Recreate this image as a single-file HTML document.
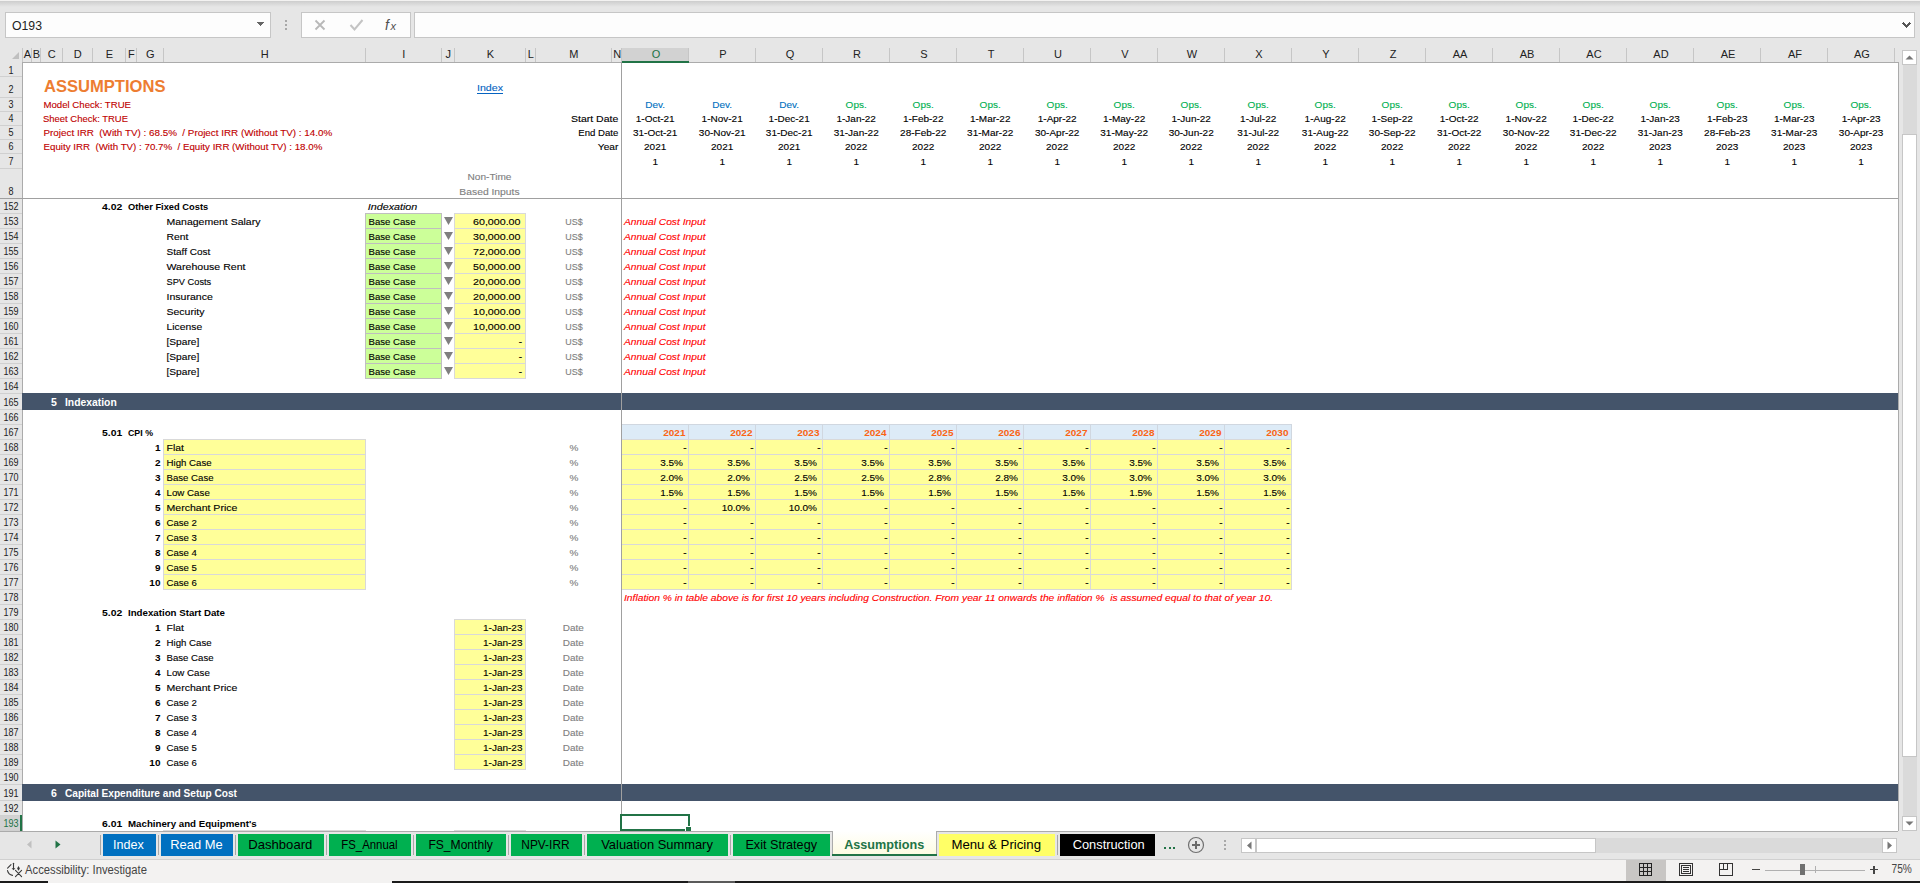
<!DOCTYPE html>
<html><head><meta charset="utf-8"><style>html,body{margin:0;padding:0;background:#fff;overflow:hidden}svg{display:block}text{font-family:"Liberation Sans",sans-serif;white-space:pre}</style></head>
<body><svg width="1920" height="883" viewBox="0 0 1920 883" shape-rendering="crispEdges">
<rect x="0" y="0" width="1920" height="883" fill="#e6e6e6" />
<rect x="0" y="0" width="1920" height="1" fill="#f3f2f1" />
<defs><linearGradient id="tg" x1="0" y1="0" x2="0" y2="1"><stop offset="0" stop-color="#cdcdcd"/><stop offset="1" stop-color="#e6e6e6"/></linearGradient></defs>
<rect x="0" y="1" width="1920" height="6" fill="url(#tg)" />
<rect x="5.5" y="12.5" width="265" height="25" fill="#fdfdfd" stroke="#c6c6c6" stroke-width="1"/>
<text x="12" y="30" font-size="13.0" fill="#222" textLength="30" lengthAdjust="spacingAndGlyphs" >O193</text>
<path d="M257 22 L264 22 L260.5 26 Z" fill="#666"/>
<rect x="285" y="20" width="2" height="2" fill="#a8a8a8" />
<rect x="285" y="24" width="2" height="2" fill="#a8a8a8" />
<rect x="285" y="28" width="2" height="2" fill="#a8a8a8" />
<rect x="301.5" y="12.5" width="109" height="25" fill="#fdfdfd" stroke="#c6c6c6" stroke-width="1"/>
<path d="M315.5 20.5 L324.5 29.5 M324.5 20.5 L315.5 29.5" stroke="#b8b8b8" stroke-width="1.8" fill="none" shape-rendering="auto"/>
<path d="M350.5 25 L354.5 29.5 L362.5 20" stroke="#c4c4c4" stroke-width="2" fill="none" shape-rendering="auto"/>
<text x="385" y="29.5" font-size="14.0" fill="#505050" font-style="italic" font-family="Liberation Serif" >f</text>
<text x="390.5" y="29.5" font-size="11.0" fill="#505050" font-style="italic" font-family="Liberation Serif" >x</text>
<rect x="414.5" y="12.5" width="1500" height="25" fill="#fdfdfd" stroke="#c6c6c6" stroke-width="1"/>
<path d="M1903 23 L1906.5 26.5 L1910 23" stroke="#555" stroke-width="1.5" fill="none"/>
<rect x="22" y="62" width="1876" height="769" fill="#ffffff" />
<rect x="22" y="47" width="1876" height="15" fill="#e6e6e6" />
<rect x="622" y="48" width="67" height="14" fill="#d2d2d2" />
<line x1="0" y1="62.5" x2="22" y2="62.5" stroke="#c4c4c4" stroke-width="1"/>
<line x1="22" y1="62.5" x2="1898" y2="62.5" stroke="#ababab" stroke-width="1"/>
<line x1="22.5" y1="48" x2="22.5" y2="62" stroke="#c6c6c6" stroke-width="1"/>
<text x="27.3" y="57.5" font-size="11.0" fill="#222" text-anchor="middle" >A</text>
<line x1="31.5" y1="48" x2="31.5" y2="62" stroke="#c6c6c6" stroke-width="1"/>
<text x="36.3" y="57.5" font-size="11.0" fill="#222" text-anchor="middle" >B</text>
<line x1="40.5" y1="48" x2="40.5" y2="62" stroke="#c6c6c6" stroke-width="1"/>
<text x="51.8" y="57.5" font-size="11.0" fill="#222" text-anchor="middle" >C</text>
<line x1="62.5" y1="48" x2="62.5" y2="62" stroke="#c6c6c6" stroke-width="1"/>
<text x="77.8" y="57.5" font-size="11.0" fill="#222" text-anchor="middle" >D</text>
<line x1="92.5" y1="48" x2="92.5" y2="62" stroke="#c6c6c6" stroke-width="1"/>
<text x="109.3" y="57.5" font-size="11.0" fill="#222" text-anchor="middle" >E</text>
<line x1="125.5" y1="48" x2="125.5" y2="62" stroke="#c6c6c6" stroke-width="1"/>
<text x="131.3" y="57.5" font-size="11.0" fill="#222" text-anchor="middle" >F</text>
<line x1="136.5" y1="48" x2="136.5" y2="62" stroke="#c6c6c6" stroke-width="1"/>
<text x="150.3" y="57.5" font-size="11.0" fill="#222" text-anchor="middle" >G</text>
<line x1="163.5" y1="48" x2="163.5" y2="62" stroke="#c6c6c6" stroke-width="1"/>
<text x="264.8" y="57.5" font-size="11.0" fill="#222" text-anchor="middle" >H</text>
<line x1="365.5" y1="48" x2="365.5" y2="62" stroke="#c6c6c6" stroke-width="1"/>
<text x="403.8" y="57.5" font-size="11.0" fill="#222" text-anchor="middle" >I</text>
<line x1="441.5" y1="48" x2="441.5" y2="62" stroke="#c6c6c6" stroke-width="1"/>
<text x="448.3" y="57.5" font-size="11.0" fill="#222" text-anchor="middle" >J</text>
<line x1="454.5" y1="48" x2="454.5" y2="62" stroke="#c6c6c6" stroke-width="1"/>
<text x="490.3" y="57.5" font-size="11.0" fill="#222" text-anchor="middle" >K</text>
<line x1="525.5" y1="48" x2="525.5" y2="62" stroke="#c6c6c6" stroke-width="1"/>
<text x="530.8" y="57.5" font-size="11.0" fill="#222" text-anchor="middle" >L</text>
<line x1="535.5" y1="48" x2="535.5" y2="62" stroke="#c6c6c6" stroke-width="1"/>
<text x="573.8" y="57.5" font-size="11.0" fill="#222" text-anchor="middle" >M</text>
<line x1="611.5" y1="48" x2="611.5" y2="62" stroke="#c6c6c6" stroke-width="1"/>
<text x="617.15" y="57.5" font-size="11.0" fill="#222" text-anchor="middle" >N</text>
<line x1="621.5" y1="48" x2="621.5" y2="62" stroke="#c6c6c6" stroke-width="1"/>
<text x="656.0" y="57.5" font-size="11.0" fill="#217346" text-anchor="middle" >O</text>
<line x1="688.5" y1="48" x2="688.5" y2="62" stroke="#c6c6c6" stroke-width="1"/>
<text x="723.0" y="57.5" font-size="11.0" fill="#222" text-anchor="middle" >P</text>
<line x1="755.5" y1="48" x2="755.5" y2="62" stroke="#c6c6c6" stroke-width="1"/>
<text x="790.0" y="57.5" font-size="11.0" fill="#222" text-anchor="middle" >Q</text>
<line x1="822.5" y1="48" x2="822.5" y2="62" stroke="#c6c6c6" stroke-width="1"/>
<text x="857.0" y="57.5" font-size="11.0" fill="#222" text-anchor="middle" >R</text>
<line x1="889.5" y1="48" x2="889.5" y2="62" stroke="#c6c6c6" stroke-width="1"/>
<text x="924.0" y="57.5" font-size="11.0" fill="#222" text-anchor="middle" >S</text>
<line x1="956.5" y1="48" x2="956.5" y2="62" stroke="#c6c6c6" stroke-width="1"/>
<text x="991.0" y="57.5" font-size="11.0" fill="#222" text-anchor="middle" >T</text>
<line x1="1023.5" y1="48" x2="1023.5" y2="62" stroke="#c6c6c6" stroke-width="1"/>
<text x="1058.0" y="57.5" font-size="11.0" fill="#222" text-anchor="middle" >U</text>
<line x1="1090.5" y1="48" x2="1090.5" y2="62" stroke="#c6c6c6" stroke-width="1"/>
<text x="1125.0" y="57.5" font-size="11.0" fill="#222" text-anchor="middle" >V</text>
<line x1="1157.5" y1="48" x2="1157.5" y2="62" stroke="#c6c6c6" stroke-width="1"/>
<text x="1192.0" y="57.5" font-size="11.0" fill="#222" text-anchor="middle" >W</text>
<line x1="1224.5" y1="48" x2="1224.5" y2="62" stroke="#c6c6c6" stroke-width="1"/>
<text x="1259.0" y="57.5" font-size="11.0" fill="#222" text-anchor="middle" >X</text>
<line x1="1291.5" y1="48" x2="1291.5" y2="62" stroke="#c6c6c6" stroke-width="1"/>
<text x="1326.0" y="57.5" font-size="11.0" fill="#222" text-anchor="middle" >Y</text>
<line x1="1358.5" y1="48" x2="1358.5" y2="62" stroke="#c6c6c6" stroke-width="1"/>
<text x="1393.0" y="57.5" font-size="11.0" fill="#222" text-anchor="middle" >Z</text>
<line x1="1425.5" y1="48" x2="1425.5" y2="62" stroke="#c6c6c6" stroke-width="1"/>
<text x="1460.0" y="57.5" font-size="11.0" fill="#222" text-anchor="middle" >AA</text>
<line x1="1492.5" y1="48" x2="1492.5" y2="62" stroke="#c6c6c6" stroke-width="1"/>
<text x="1527.0" y="57.5" font-size="11.0" fill="#222" text-anchor="middle" >AB</text>
<line x1="1559.5" y1="48" x2="1559.5" y2="62" stroke="#c6c6c6" stroke-width="1"/>
<text x="1594.0" y="57.5" font-size="11.0" fill="#222" text-anchor="middle" >AC</text>
<line x1="1626.5" y1="48" x2="1626.5" y2="62" stroke="#c6c6c6" stroke-width="1"/>
<text x="1661.0" y="57.5" font-size="11.0" fill="#222" text-anchor="middle" >AD</text>
<line x1="1693.5" y1="48" x2="1693.5" y2="62" stroke="#c6c6c6" stroke-width="1"/>
<text x="1728.0" y="57.5" font-size="11.0" fill="#222" text-anchor="middle" >AE</text>
<line x1="1760.5" y1="48" x2="1760.5" y2="62" stroke="#c6c6c6" stroke-width="1"/>
<text x="1795.0" y="57.5" font-size="11.0" fill="#222" text-anchor="middle" >AF</text>
<line x1="1827.5" y1="48" x2="1827.5" y2="62" stroke="#c6c6c6" stroke-width="1"/>
<text x="1861.8999999999999" y="57.5" font-size="11.0" fill="#222" text-anchor="middle" >AG</text>
<line x1="1894.5" y1="48" x2="1894.5" y2="62" stroke="#c6c6c6" stroke-width="1"/>
<rect x="622" y="61" width="67" height="2" fill="#217346" />
<path d="M19 52 L19 59 L12 59 Z" fill="#bfbfbf" shape-rendering="auto"/>
<rect x="0" y="62" width="22" height="769" fill="#e6e6e6" />
<line x1="0" y1="76.5" x2="22" y2="76.5" stroke="#d0d0d0" stroke-width="1"/>
<text x="11" y="74" font-size="10.5" fill="#222" text-anchor="middle" textLength="5" lengthAdjust="spacingAndGlyphs" >1</text>
<line x1="0" y1="97.5" x2="22" y2="97.5" stroke="#d0d0d0" stroke-width="1"/>
<text x="11" y="92.5" font-size="10.5" fill="#222" text-anchor="middle" textLength="5" lengthAdjust="spacingAndGlyphs" >2</text>
<line x1="0" y1="111.5" x2="22" y2="111.5" stroke="#d0d0d0" stroke-width="1"/>
<text x="11" y="107.5" font-size="10.5" fill="#222" text-anchor="middle" textLength="5" lengthAdjust="spacingAndGlyphs" >3</text>
<line x1="0" y1="125.5" x2="22" y2="125.5" stroke="#d0d0d0" stroke-width="1"/>
<text x="11" y="121.5" font-size="10.5" fill="#222" text-anchor="middle" textLength="5" lengthAdjust="spacingAndGlyphs" >4</text>
<line x1="0" y1="139.5" x2="22" y2="139.5" stroke="#d0d0d0" stroke-width="1"/>
<text x="11" y="135.5" font-size="10.5" fill="#222" text-anchor="middle" textLength="5" lengthAdjust="spacingAndGlyphs" >5</text>
<line x1="0" y1="153.5" x2="22" y2="153.5" stroke="#d0d0d0" stroke-width="1"/>
<text x="11" y="149.5" font-size="10.5" fill="#222" text-anchor="middle" textLength="5" lengthAdjust="spacingAndGlyphs" >6</text>
<line x1="0" y1="168.5" x2="22" y2="168.5" stroke="#d0d0d0" stroke-width="1"/>
<text x="11" y="164.5" font-size="10.5" fill="#222" text-anchor="middle" textLength="5" lengthAdjust="spacingAndGlyphs" >7</text>
<line x1="0" y1="198.5" x2="22" y2="198.5" stroke="#d0d0d0" stroke-width="1"/>
<text x="11" y="195" font-size="10.5" fill="#222" text-anchor="middle" textLength="5" lengthAdjust="spacingAndGlyphs" >8</text>
<line x1="0" y1="213.5" x2="22" y2="213.5" stroke="#d0d0d0" stroke-width="1"/>
<text x="11" y="209.5" font-size="10.5" fill="#222" text-anchor="middle" textLength="15" lengthAdjust="spacingAndGlyphs" >152</text>
<line x1="0" y1="228.5" x2="22" y2="228.5" stroke="#d0d0d0" stroke-width="1"/>
<text x="11" y="224.5" font-size="10.5" fill="#222" text-anchor="middle" textLength="15" lengthAdjust="spacingAndGlyphs" >153</text>
<line x1="0" y1="243.5" x2="22" y2="243.5" stroke="#d0d0d0" stroke-width="1"/>
<text x="11" y="239.5" font-size="10.5" fill="#222" text-anchor="middle" textLength="15" lengthAdjust="spacingAndGlyphs" >154</text>
<line x1="0" y1="258.5" x2="22" y2="258.5" stroke="#d0d0d0" stroke-width="1"/>
<text x="11" y="254.5" font-size="10.5" fill="#222" text-anchor="middle" textLength="15" lengthAdjust="spacingAndGlyphs" >155</text>
<line x1="0" y1="273.5" x2="22" y2="273.5" stroke="#d0d0d0" stroke-width="1"/>
<text x="11" y="269.5" font-size="10.5" fill="#222" text-anchor="middle" textLength="15" lengthAdjust="spacingAndGlyphs" >156</text>
<line x1="0" y1="288.5" x2="22" y2="288.5" stroke="#d0d0d0" stroke-width="1"/>
<text x="11" y="284.5" font-size="10.5" fill="#222" text-anchor="middle" textLength="15" lengthAdjust="spacingAndGlyphs" >157</text>
<line x1="0" y1="303.5" x2="22" y2="303.5" stroke="#d0d0d0" stroke-width="1"/>
<text x="11" y="299.5" font-size="10.5" fill="#222" text-anchor="middle" textLength="15" lengthAdjust="spacingAndGlyphs" >158</text>
<line x1="0" y1="318.5" x2="22" y2="318.5" stroke="#d0d0d0" stroke-width="1"/>
<text x="11" y="314.5" font-size="10.5" fill="#222" text-anchor="middle" textLength="15" lengthAdjust="spacingAndGlyphs" >159</text>
<line x1="0" y1="333.5" x2="22" y2="333.5" stroke="#d0d0d0" stroke-width="1"/>
<text x="11" y="329.5" font-size="10.5" fill="#222" text-anchor="middle" textLength="15" lengthAdjust="spacingAndGlyphs" >160</text>
<line x1="0" y1="348.5" x2="22" y2="348.5" stroke="#d0d0d0" stroke-width="1"/>
<text x="11" y="344.5" font-size="10.5" fill="#222" text-anchor="middle" textLength="15" lengthAdjust="spacingAndGlyphs" >161</text>
<line x1="0" y1="363.5" x2="22" y2="363.5" stroke="#d0d0d0" stroke-width="1"/>
<text x="11" y="359.5" font-size="10.5" fill="#222" text-anchor="middle" textLength="15" lengthAdjust="spacingAndGlyphs" >162</text>
<line x1="0" y1="378.5" x2="22" y2="378.5" stroke="#d0d0d0" stroke-width="1"/>
<text x="11" y="374.5" font-size="10.5" fill="#222" text-anchor="middle" textLength="15" lengthAdjust="spacingAndGlyphs" >163</text>
<line x1="0" y1="393.5" x2="22" y2="393.5" stroke="#d0d0d0" stroke-width="1"/>
<text x="11" y="389.5" font-size="10.5" fill="#222" text-anchor="middle" textLength="15" lengthAdjust="spacingAndGlyphs" >164</text>
<line x1="0" y1="409.5" x2="22" y2="409.5" stroke="#d0d0d0" stroke-width="1"/>
<text x="11" y="405.5" font-size="10.5" fill="#222" text-anchor="middle" textLength="15" lengthAdjust="spacingAndGlyphs" >165</text>
<line x1="0" y1="424.5" x2="22" y2="424.5" stroke="#d0d0d0" stroke-width="1"/>
<text x="11" y="420.5" font-size="10.5" fill="#222" text-anchor="middle" textLength="15" lengthAdjust="spacingAndGlyphs" >166</text>
<line x1="0" y1="439.5" x2="22" y2="439.5" stroke="#d0d0d0" stroke-width="1"/>
<text x="11" y="435.5" font-size="10.5" fill="#222" text-anchor="middle" textLength="15" lengthAdjust="spacingAndGlyphs" >167</text>
<line x1="0" y1="454.5" x2="22" y2="454.5" stroke="#d0d0d0" stroke-width="1"/>
<text x="11" y="450.5" font-size="10.5" fill="#222" text-anchor="middle" textLength="15" lengthAdjust="spacingAndGlyphs" >168</text>
<line x1="0" y1="469.5" x2="22" y2="469.5" stroke="#d0d0d0" stroke-width="1"/>
<text x="11" y="465.5" font-size="10.5" fill="#222" text-anchor="middle" textLength="15" lengthAdjust="spacingAndGlyphs" >169</text>
<line x1="0" y1="484.5" x2="22" y2="484.5" stroke="#d0d0d0" stroke-width="1"/>
<text x="11" y="480.5" font-size="10.5" fill="#222" text-anchor="middle" textLength="15" lengthAdjust="spacingAndGlyphs" >170</text>
<line x1="0" y1="499.5" x2="22" y2="499.5" stroke="#d0d0d0" stroke-width="1"/>
<text x="11" y="495.5" font-size="10.5" fill="#222" text-anchor="middle" textLength="15" lengthAdjust="spacingAndGlyphs" >171</text>
<line x1="0" y1="514.5" x2="22" y2="514.5" stroke="#d0d0d0" stroke-width="1"/>
<text x="11" y="510.5" font-size="10.5" fill="#222" text-anchor="middle" textLength="15" lengthAdjust="spacingAndGlyphs" >172</text>
<line x1="0" y1="529.5" x2="22" y2="529.5" stroke="#d0d0d0" stroke-width="1"/>
<text x="11" y="525.5" font-size="10.5" fill="#222" text-anchor="middle" textLength="15" lengthAdjust="spacingAndGlyphs" >173</text>
<line x1="0" y1="544.5" x2="22" y2="544.5" stroke="#d0d0d0" stroke-width="1"/>
<text x="11" y="540.5" font-size="10.5" fill="#222" text-anchor="middle" textLength="15" lengthAdjust="spacingAndGlyphs" >174</text>
<line x1="0" y1="559.5" x2="22" y2="559.5" stroke="#d0d0d0" stroke-width="1"/>
<text x="11" y="555.5" font-size="10.5" fill="#222" text-anchor="middle" textLength="15" lengthAdjust="spacingAndGlyphs" >175</text>
<line x1="0" y1="574.5" x2="22" y2="574.5" stroke="#d0d0d0" stroke-width="1"/>
<text x="11" y="570.5" font-size="10.5" fill="#222" text-anchor="middle" textLength="15" lengthAdjust="spacingAndGlyphs" >176</text>
<line x1="0" y1="589.5" x2="22" y2="589.5" stroke="#d0d0d0" stroke-width="1"/>
<text x="11" y="585.5" font-size="10.5" fill="#222" text-anchor="middle" textLength="15" lengthAdjust="spacingAndGlyphs" >177</text>
<line x1="0" y1="604.5" x2="22" y2="604.5" stroke="#d0d0d0" stroke-width="1"/>
<text x="11" y="600.5" font-size="10.5" fill="#222" text-anchor="middle" textLength="15" lengthAdjust="spacingAndGlyphs" >178</text>
<line x1="0" y1="619.5" x2="22" y2="619.5" stroke="#d0d0d0" stroke-width="1"/>
<text x="11" y="615.5" font-size="10.5" fill="#222" text-anchor="middle" textLength="15" lengthAdjust="spacingAndGlyphs" >179</text>
<line x1="0" y1="634.5" x2="22" y2="634.5" stroke="#d0d0d0" stroke-width="1"/>
<text x="11" y="630.5" font-size="10.5" fill="#222" text-anchor="middle" textLength="15" lengthAdjust="spacingAndGlyphs" >180</text>
<line x1="0" y1="649.5" x2="22" y2="649.5" stroke="#d0d0d0" stroke-width="1"/>
<text x="11" y="645.5" font-size="10.5" fill="#222" text-anchor="middle" textLength="15" lengthAdjust="spacingAndGlyphs" >181</text>
<line x1="0" y1="664.5" x2="22" y2="664.5" stroke="#d0d0d0" stroke-width="1"/>
<text x="11" y="660.5" font-size="10.5" fill="#222" text-anchor="middle" textLength="15" lengthAdjust="spacingAndGlyphs" >182</text>
<line x1="0" y1="679.5" x2="22" y2="679.5" stroke="#d0d0d0" stroke-width="1"/>
<text x="11" y="675.5" font-size="10.5" fill="#222" text-anchor="middle" textLength="15" lengthAdjust="spacingAndGlyphs" >183</text>
<line x1="0" y1="694.5" x2="22" y2="694.5" stroke="#d0d0d0" stroke-width="1"/>
<text x="11" y="690.5" font-size="10.5" fill="#222" text-anchor="middle" textLength="15" lengthAdjust="spacingAndGlyphs" >184</text>
<line x1="0" y1="709.5" x2="22" y2="709.5" stroke="#d0d0d0" stroke-width="1"/>
<text x="11" y="705.5" font-size="10.5" fill="#222" text-anchor="middle" textLength="15" lengthAdjust="spacingAndGlyphs" >185</text>
<line x1="0" y1="724.5" x2="22" y2="724.5" stroke="#d0d0d0" stroke-width="1"/>
<text x="11" y="720.5" font-size="10.5" fill="#222" text-anchor="middle" textLength="15" lengthAdjust="spacingAndGlyphs" >186</text>
<line x1="0" y1="739.5" x2="22" y2="739.5" stroke="#d0d0d0" stroke-width="1"/>
<text x="11" y="735.5" font-size="10.5" fill="#222" text-anchor="middle" textLength="15" lengthAdjust="spacingAndGlyphs" >187</text>
<line x1="0" y1="754.5" x2="22" y2="754.5" stroke="#d0d0d0" stroke-width="1"/>
<text x="11" y="750.5" font-size="10.5" fill="#222" text-anchor="middle" textLength="15" lengthAdjust="spacingAndGlyphs" >188</text>
<line x1="0" y1="769.5" x2="22" y2="769.5" stroke="#d0d0d0" stroke-width="1"/>
<text x="11" y="765.5" font-size="10.5" fill="#222" text-anchor="middle" textLength="15" lengthAdjust="spacingAndGlyphs" >189</text>
<line x1="0" y1="784.5" x2="22" y2="784.5" stroke="#d0d0d0" stroke-width="1"/>
<text x="11" y="780.5" font-size="10.5" fill="#222" text-anchor="middle" textLength="15" lengthAdjust="spacingAndGlyphs" >190</text>
<line x1="0" y1="800.5" x2="22" y2="800.5" stroke="#d0d0d0" stroke-width="1"/>
<text x="11" y="796.5" font-size="10.5" fill="#222" text-anchor="middle" textLength="15" lengthAdjust="spacingAndGlyphs" >191</text>
<line x1="0" y1="815.5" x2="22" y2="815.5" stroke="#d0d0d0" stroke-width="1"/>
<text x="11" y="811.5" font-size="10.5" fill="#222" text-anchor="middle" textLength="15" lengthAdjust="spacingAndGlyphs" >192</text>
<line x1="0" y1="830.5" x2="22" y2="830.5" stroke="#d0d0d0" stroke-width="1"/>
<rect x="0" y="816" width="22" height="14" fill="#d2d2d2" />
<text x="11" y="826.5" font-size="10.5" fill="#217346" text-anchor="middle" textLength="15" lengthAdjust="spacingAndGlyphs" >193</text>
<line x1="22.5" y1="62" x2="22.5" y2="831" stroke="#ababab" stroke-width="1"/>
<rect x="20" y="815" width="2" height="16" fill="#217346" />
<rect x="1898" y="47" width="22" height="784" fill="#e6e6e6" />
<line x1="1898.5" y1="62" x2="1898.5" y2="831" stroke="#ababab" stroke-width="1"/>
<text x="44" y="92" font-size="17.0" fill="#ed7d31" font-weight="bold" textLength="121.5" lengthAdjust="spacingAndGlyphs" >ASSUMPTIONS</text>
<text x="43.5" y="107.6" font-size="9.3" fill="#c00000" textLength="87.5" lengthAdjust="spacingAndGlyphs"  stroke="#c00000" stroke-width="0.12">Model Check: TRUE</text>
<text x="43" y="121.6" font-size="9.3" fill="#c00000" textLength="85" lengthAdjust="spacingAndGlyphs"  stroke="#c00000" stroke-width="0.12">Sheet Check: TRUE</text>
<text x="43.5" y="135.6" font-size="9.3" fill="#c00000" textLength="288.7" lengthAdjust="spacingAndGlyphs"  stroke="#c00000" stroke-width="0.12">Project IRR  (With TV) : 68.5%  / Project IRR (Without TV) : 14.0%</text>
<text x="43.5" y="149.6" font-size="9.3" fill="#c00000" textLength="278.8" lengthAdjust="spacingAndGlyphs"  stroke="#c00000" stroke-width="0.12">Equity IRR  (With TV) : 70.7%  / Equity IRR (Without TV) : 18.0%</text>
<text x="477" y="91.4" font-size="9.3" fill="#0563c1" textLength="26" lengthAdjust="spacingAndGlyphs"  stroke="#0563c1" stroke-width="0.12">Index</text>
<rect x="477" y="93" width="26" height="1" fill="#0563c1" />
<text x="618.3" y="121.6" font-size="9.3" fill="#000" text-anchor="end" textLength="47.3" lengthAdjust="spacingAndGlyphs"  stroke="#000" stroke-width="0.12">Start Date</text>
<text x="618.3" y="135.6" font-size="9.3" fill="#000" text-anchor="end" textLength="40" lengthAdjust="spacingAndGlyphs"  stroke="#000" stroke-width="0.12">End Date</text>
<text x="618.3" y="149.6" font-size="9.3" fill="#000" text-anchor="end" textLength="20.5" lengthAdjust="spacingAndGlyphs"  stroke="#000" stroke-width="0.12">Year</text>
<text x="489.5" y="179.6" font-size="9.3" fill="#808080" text-anchor="middle" textLength="44" lengthAdjust="spacingAndGlyphs"  stroke="#808080" stroke-width="0.12">Non-Time</text>
<text x="489.5" y="194.6" font-size="9.3" fill="#808080" text-anchor="middle" textLength="60.3" lengthAdjust="spacingAndGlyphs"  stroke="#808080" stroke-width="0.12">Based Inputs</text>
<text x="655.2" y="107.6" font-size="9.3" fill="#0070c0" text-anchor="middle" textLength="19.82" lengthAdjust="spacingAndGlyphs"  stroke="#0070c0" stroke-width="0.12">Dev.</text>
<text x="655.2" y="121.6" font-size="9.3" fill="#000" text-anchor="middle" textLength="38.9" lengthAdjust="spacingAndGlyphs"  stroke="#000" stroke-width="0.12">1-Oct-21</text>
<text x="655.2" y="135.6" font-size="9.3" fill="#000" text-anchor="middle" textLength="44.46" lengthAdjust="spacingAndGlyphs"  stroke="#000" stroke-width="0.12">31-Oct-21</text>
<text x="655.2" y="149.6" font-size="9.3" fill="#000" text-anchor="middle" textLength="22.25" lengthAdjust="spacingAndGlyphs"  stroke="#000" stroke-width="0.12">2021</text>
<text x="655.2" y="164.6" font-size="9.3" fill="#000" text-anchor="middle" textLength="5.56" lengthAdjust="spacingAndGlyphs"  stroke="#000" stroke-width="0.12">1</text>
<text x="722.2" y="107.6" font-size="9.3" fill="#0070c0" text-anchor="middle" textLength="19.82" lengthAdjust="spacingAndGlyphs"  stroke="#0070c0" stroke-width="0.12">Dev.</text>
<text x="722.2" y="121.6" font-size="9.3" fill="#000" text-anchor="middle" textLength="41.13" lengthAdjust="spacingAndGlyphs"  stroke="#000" stroke-width="0.12">1-Nov-21</text>
<text x="722.2" y="135.6" font-size="9.3" fill="#000" text-anchor="middle" textLength="46.69" lengthAdjust="spacingAndGlyphs"  stroke="#000" stroke-width="0.12">30-Nov-21</text>
<text x="722.2" y="149.6" font-size="9.3" fill="#000" text-anchor="middle" textLength="22.25" lengthAdjust="spacingAndGlyphs"  stroke="#000" stroke-width="0.12">2021</text>
<text x="722.2" y="164.6" font-size="9.3" fill="#000" text-anchor="middle" textLength="5.56" lengthAdjust="spacingAndGlyphs"  stroke="#000" stroke-width="0.12">1</text>
<text x="789.2" y="107.6" font-size="9.3" fill="#0070c0" text-anchor="middle" textLength="19.82" lengthAdjust="spacingAndGlyphs"  stroke="#0070c0" stroke-width="0.12">Dev.</text>
<text x="789.2" y="121.6" font-size="9.3" fill="#000" text-anchor="middle" textLength="41.13" lengthAdjust="spacingAndGlyphs"  stroke="#000" stroke-width="0.12">1-Dec-21</text>
<text x="789.2" y="135.6" font-size="9.3" fill="#000" text-anchor="middle" textLength="46.69" lengthAdjust="spacingAndGlyphs"  stroke="#000" stroke-width="0.12">31-Dec-21</text>
<text x="789.2" y="149.6" font-size="9.3" fill="#000" text-anchor="middle" textLength="22.25" lengthAdjust="spacingAndGlyphs"  stroke="#000" stroke-width="0.12">2021</text>
<text x="789.2" y="164.6" font-size="9.3" fill="#000" text-anchor="middle" textLength="5.56" lengthAdjust="spacingAndGlyphs"  stroke="#000" stroke-width="0.12">1</text>
<text x="856.2" y="107.6" font-size="9.3" fill="#00b050" text-anchor="middle" textLength="21.12" lengthAdjust="spacingAndGlyphs"  stroke="#00b050" stroke-width="0.12">Ops.</text>
<text x="856.2" y="121.6" font-size="9.3" fill="#000" text-anchor="middle" textLength="39.47" lengthAdjust="spacingAndGlyphs"  stroke="#000" stroke-width="0.12">1-Jan-22</text>
<text x="856.2" y="135.6" font-size="9.3" fill="#000" text-anchor="middle" textLength="45.03" lengthAdjust="spacingAndGlyphs"  stroke="#000" stroke-width="0.12">31-Jan-22</text>
<text x="856.2" y="149.6" font-size="9.3" fill="#000" text-anchor="middle" textLength="22.25" lengthAdjust="spacingAndGlyphs"  stroke="#000" stroke-width="0.12">2022</text>
<text x="856.2" y="164.6" font-size="9.3" fill="#000" text-anchor="middle" textLength="5.56" lengthAdjust="spacingAndGlyphs"  stroke="#000" stroke-width="0.12">1</text>
<text x="923.2" y="107.6" font-size="9.3" fill="#00b050" text-anchor="middle" textLength="21.12" lengthAdjust="spacingAndGlyphs"  stroke="#00b050" stroke-width="0.12">Ops.</text>
<text x="923.2" y="121.6" font-size="9.3" fill="#000" text-anchor="middle" textLength="40.58" lengthAdjust="spacingAndGlyphs"  stroke="#000" stroke-width="0.12">1-Feb-22</text>
<text x="923.2" y="135.6" font-size="9.3" fill="#000" text-anchor="middle" textLength="46.14" lengthAdjust="spacingAndGlyphs"  stroke="#000" stroke-width="0.12">28-Feb-22</text>
<text x="923.2" y="149.6" font-size="9.3" fill="#000" text-anchor="middle" textLength="22.25" lengthAdjust="spacingAndGlyphs"  stroke="#000" stroke-width="0.12">2022</text>
<text x="923.2" y="164.6" font-size="9.3" fill="#000" text-anchor="middle" textLength="5.56" lengthAdjust="spacingAndGlyphs"  stroke="#000" stroke-width="0.12">1</text>
<text x="990.2" y="107.6" font-size="9.3" fill="#00b050" text-anchor="middle" textLength="21.12" lengthAdjust="spacingAndGlyphs"  stroke="#00b050" stroke-width="0.12">Ops.</text>
<text x="990.2" y="121.6" font-size="9.3" fill="#000" text-anchor="middle" textLength="40.57" lengthAdjust="spacingAndGlyphs"  stroke="#000" stroke-width="0.12">1-Mar-22</text>
<text x="990.2" y="135.6" font-size="9.3" fill="#000" text-anchor="middle" textLength="46.13" lengthAdjust="spacingAndGlyphs"  stroke="#000" stroke-width="0.12">31-Mar-22</text>
<text x="990.2" y="149.6" font-size="9.3" fill="#000" text-anchor="middle" textLength="22.25" lengthAdjust="spacingAndGlyphs"  stroke="#000" stroke-width="0.12">2022</text>
<text x="990.2" y="164.6" font-size="9.3" fill="#000" text-anchor="middle" textLength="5.56" lengthAdjust="spacingAndGlyphs"  stroke="#000" stroke-width="0.12">1</text>
<text x="1057.2" y="107.6" font-size="9.3" fill="#00b050" text-anchor="middle" textLength="21.12" lengthAdjust="spacingAndGlyphs"  stroke="#00b050" stroke-width="0.12">Ops.</text>
<text x="1057.2" y="121.6" font-size="9.3" fill="#000" text-anchor="middle" textLength="38.91" lengthAdjust="spacingAndGlyphs"  stroke="#000" stroke-width="0.12">1-Apr-22</text>
<text x="1057.2" y="135.6" font-size="9.3" fill="#000" text-anchor="middle" textLength="44.47" lengthAdjust="spacingAndGlyphs"  stroke="#000" stroke-width="0.12">30-Apr-22</text>
<text x="1057.2" y="149.6" font-size="9.3" fill="#000" text-anchor="middle" textLength="22.25" lengthAdjust="spacingAndGlyphs"  stroke="#000" stroke-width="0.12">2022</text>
<text x="1057.2" y="164.6" font-size="9.3" fill="#000" text-anchor="middle" textLength="5.56" lengthAdjust="spacingAndGlyphs"  stroke="#000" stroke-width="0.12">1</text>
<text x="1124.2" y="107.6" font-size="9.3" fill="#00b050" text-anchor="middle" textLength="21.12" lengthAdjust="spacingAndGlyphs"  stroke="#00b050" stroke-width="0.12">Ops.</text>
<text x="1124.2" y="121.6" font-size="9.3" fill="#000" text-anchor="middle" textLength="42.24" lengthAdjust="spacingAndGlyphs"  stroke="#000" stroke-width="0.12">1-May-22</text>
<text x="1124.2" y="135.6" font-size="9.3" fill="#000" text-anchor="middle" textLength="47.8" lengthAdjust="spacingAndGlyphs"  stroke="#000" stroke-width="0.12">31-May-22</text>
<text x="1124.2" y="149.6" font-size="9.3" fill="#000" text-anchor="middle" textLength="22.25" lengthAdjust="spacingAndGlyphs"  stroke="#000" stroke-width="0.12">2022</text>
<text x="1124.2" y="164.6" font-size="9.3" fill="#000" text-anchor="middle" textLength="5.56" lengthAdjust="spacingAndGlyphs"  stroke="#000" stroke-width="0.12">1</text>
<text x="1191.2" y="107.6" font-size="9.3" fill="#00b050" text-anchor="middle" textLength="21.12" lengthAdjust="spacingAndGlyphs"  stroke="#00b050" stroke-width="0.12">Ops.</text>
<text x="1191.2" y="121.6" font-size="9.3" fill="#000" text-anchor="middle" textLength="39.47" lengthAdjust="spacingAndGlyphs"  stroke="#000" stroke-width="0.12">1-Jun-22</text>
<text x="1191.2" y="135.6" font-size="9.3" fill="#000" text-anchor="middle" textLength="45.03" lengthAdjust="spacingAndGlyphs"  stroke="#000" stroke-width="0.12">30-Jun-22</text>
<text x="1191.2" y="149.6" font-size="9.3" fill="#000" text-anchor="middle" textLength="22.25" lengthAdjust="spacingAndGlyphs"  stroke="#000" stroke-width="0.12">2022</text>
<text x="1191.2" y="164.6" font-size="9.3" fill="#000" text-anchor="middle" textLength="5.56" lengthAdjust="spacingAndGlyphs"  stroke="#000" stroke-width="0.12">1</text>
<text x="1258.2" y="107.6" font-size="9.3" fill="#00b050" text-anchor="middle" textLength="21.12" lengthAdjust="spacingAndGlyphs"  stroke="#00b050" stroke-width="0.12">Ops.</text>
<text x="1258.2" y="121.6" font-size="9.3" fill="#000" text-anchor="middle" textLength="36.13" lengthAdjust="spacingAndGlyphs"  stroke="#000" stroke-width="0.12">1-Jul-22</text>
<text x="1258.2" y="135.6" font-size="9.3" fill="#000" text-anchor="middle" textLength="41.69" lengthAdjust="spacingAndGlyphs"  stroke="#000" stroke-width="0.12">31-Jul-22</text>
<text x="1258.2" y="149.6" font-size="9.3" fill="#000" text-anchor="middle" textLength="22.25" lengthAdjust="spacingAndGlyphs"  stroke="#000" stroke-width="0.12">2022</text>
<text x="1258.2" y="164.6" font-size="9.3" fill="#000" text-anchor="middle" textLength="5.56" lengthAdjust="spacingAndGlyphs"  stroke="#000" stroke-width="0.12">1</text>
<text x="1325.2" y="107.6" font-size="9.3" fill="#00b050" text-anchor="middle" textLength="21.12" lengthAdjust="spacingAndGlyphs"  stroke="#00b050" stroke-width="0.12">Ops.</text>
<text x="1325.2" y="121.6" font-size="9.3" fill="#000" text-anchor="middle" textLength="41.14" lengthAdjust="spacingAndGlyphs"  stroke="#000" stroke-width="0.12">1-Aug-22</text>
<text x="1325.2" y="135.6" font-size="9.3" fill="#000" text-anchor="middle" textLength="46.7" lengthAdjust="spacingAndGlyphs"  stroke="#000" stroke-width="0.12">31-Aug-22</text>
<text x="1325.2" y="149.6" font-size="9.3" fill="#000" text-anchor="middle" textLength="22.25" lengthAdjust="spacingAndGlyphs"  stroke="#000" stroke-width="0.12">2022</text>
<text x="1325.2" y="164.6" font-size="9.3" fill="#000" text-anchor="middle" textLength="5.56" lengthAdjust="spacingAndGlyphs"  stroke="#000" stroke-width="0.12">1</text>
<text x="1392.2" y="107.6" font-size="9.3" fill="#00b050" text-anchor="middle" textLength="21.12" lengthAdjust="spacingAndGlyphs"  stroke="#00b050" stroke-width="0.12">Ops.</text>
<text x="1392.2" y="121.6" font-size="9.3" fill="#000" text-anchor="middle" textLength="41.14" lengthAdjust="spacingAndGlyphs"  stroke="#000" stroke-width="0.12">1-Sep-22</text>
<text x="1392.2" y="135.6" font-size="9.3" fill="#000" text-anchor="middle" textLength="46.7" lengthAdjust="spacingAndGlyphs"  stroke="#000" stroke-width="0.12">30-Sep-22</text>
<text x="1392.2" y="149.6" font-size="9.3" fill="#000" text-anchor="middle" textLength="22.25" lengthAdjust="spacingAndGlyphs"  stroke="#000" stroke-width="0.12">2022</text>
<text x="1392.2" y="164.6" font-size="9.3" fill="#000" text-anchor="middle" textLength="5.56" lengthAdjust="spacingAndGlyphs"  stroke="#000" stroke-width="0.12">1</text>
<text x="1459.2" y="107.6" font-size="9.3" fill="#00b050" text-anchor="middle" textLength="21.12" lengthAdjust="spacingAndGlyphs"  stroke="#00b050" stroke-width="0.12">Ops.</text>
<text x="1459.2" y="121.6" font-size="9.3" fill="#000" text-anchor="middle" textLength="38.9" lengthAdjust="spacingAndGlyphs"  stroke="#000" stroke-width="0.12">1-Oct-22</text>
<text x="1459.2" y="135.6" font-size="9.3" fill="#000" text-anchor="middle" textLength="44.46" lengthAdjust="spacingAndGlyphs"  stroke="#000" stroke-width="0.12">31-Oct-22</text>
<text x="1459.2" y="149.6" font-size="9.3" fill="#000" text-anchor="middle" textLength="22.25" lengthAdjust="spacingAndGlyphs"  stroke="#000" stroke-width="0.12">2022</text>
<text x="1459.2" y="164.6" font-size="9.3" fill="#000" text-anchor="middle" textLength="5.56" lengthAdjust="spacingAndGlyphs"  stroke="#000" stroke-width="0.12">1</text>
<text x="1526.2" y="107.6" font-size="9.3" fill="#00b050" text-anchor="middle" textLength="21.12" lengthAdjust="spacingAndGlyphs"  stroke="#00b050" stroke-width="0.12">Ops.</text>
<text x="1526.2" y="121.6" font-size="9.3" fill="#000" text-anchor="middle" textLength="41.13" lengthAdjust="spacingAndGlyphs"  stroke="#000" stroke-width="0.12">1-Nov-22</text>
<text x="1526.2" y="135.6" font-size="9.3" fill="#000" text-anchor="middle" textLength="46.69" lengthAdjust="spacingAndGlyphs"  stroke="#000" stroke-width="0.12">30-Nov-22</text>
<text x="1526.2" y="149.6" font-size="9.3" fill="#000" text-anchor="middle" textLength="22.25" lengthAdjust="spacingAndGlyphs"  stroke="#000" stroke-width="0.12">2022</text>
<text x="1526.2" y="164.6" font-size="9.3" fill="#000" text-anchor="middle" textLength="5.56" lengthAdjust="spacingAndGlyphs"  stroke="#000" stroke-width="0.12">1</text>
<text x="1593.2" y="107.6" font-size="9.3" fill="#00b050" text-anchor="middle" textLength="21.12" lengthAdjust="spacingAndGlyphs"  stroke="#00b050" stroke-width="0.12">Ops.</text>
<text x="1593.2" y="121.6" font-size="9.3" fill="#000" text-anchor="middle" textLength="41.13" lengthAdjust="spacingAndGlyphs"  stroke="#000" stroke-width="0.12">1-Dec-22</text>
<text x="1593.2" y="135.6" font-size="9.3" fill="#000" text-anchor="middle" textLength="46.69" lengthAdjust="spacingAndGlyphs"  stroke="#000" stroke-width="0.12">31-Dec-22</text>
<text x="1593.2" y="149.6" font-size="9.3" fill="#000" text-anchor="middle" textLength="22.25" lengthAdjust="spacingAndGlyphs"  stroke="#000" stroke-width="0.12">2022</text>
<text x="1593.2" y="164.6" font-size="9.3" fill="#000" text-anchor="middle" textLength="5.56" lengthAdjust="spacingAndGlyphs"  stroke="#000" stroke-width="0.12">1</text>
<text x="1660.2" y="107.6" font-size="9.3" fill="#00b050" text-anchor="middle" textLength="21.12" lengthAdjust="spacingAndGlyphs"  stroke="#00b050" stroke-width="0.12">Ops.</text>
<text x="1660.2" y="121.6" font-size="9.3" fill="#000" text-anchor="middle" textLength="39.47" lengthAdjust="spacingAndGlyphs"  stroke="#000" stroke-width="0.12">1-Jan-23</text>
<text x="1660.2" y="135.6" font-size="9.3" fill="#000" text-anchor="middle" textLength="45.03" lengthAdjust="spacingAndGlyphs"  stroke="#000" stroke-width="0.12">31-Jan-23</text>
<text x="1660.2" y="149.6" font-size="9.3" fill="#000" text-anchor="middle" textLength="22.25" lengthAdjust="spacingAndGlyphs"  stroke="#000" stroke-width="0.12">2023</text>
<text x="1660.2" y="164.6" font-size="9.3" fill="#000" text-anchor="middle" textLength="5.56" lengthAdjust="spacingAndGlyphs"  stroke="#000" stroke-width="0.12">1</text>
<text x="1727.2" y="107.6" font-size="9.3" fill="#00b050" text-anchor="middle" textLength="21.12" lengthAdjust="spacingAndGlyphs"  stroke="#00b050" stroke-width="0.12">Ops.</text>
<text x="1727.2" y="121.6" font-size="9.3" fill="#000" text-anchor="middle" textLength="40.58" lengthAdjust="spacingAndGlyphs"  stroke="#000" stroke-width="0.12">1-Feb-23</text>
<text x="1727.2" y="135.6" font-size="9.3" fill="#000" text-anchor="middle" textLength="46.14" lengthAdjust="spacingAndGlyphs"  stroke="#000" stroke-width="0.12">28-Feb-23</text>
<text x="1727.2" y="149.6" font-size="9.3" fill="#000" text-anchor="middle" textLength="22.25" lengthAdjust="spacingAndGlyphs"  stroke="#000" stroke-width="0.12">2023</text>
<text x="1727.2" y="164.6" font-size="9.3" fill="#000" text-anchor="middle" textLength="5.56" lengthAdjust="spacingAndGlyphs"  stroke="#000" stroke-width="0.12">1</text>
<text x="1794.2" y="107.6" font-size="9.3" fill="#00b050" text-anchor="middle" textLength="21.12" lengthAdjust="spacingAndGlyphs"  stroke="#00b050" stroke-width="0.12">Ops.</text>
<text x="1794.2" y="121.6" font-size="9.3" fill="#000" text-anchor="middle" textLength="40.57" lengthAdjust="spacingAndGlyphs"  stroke="#000" stroke-width="0.12">1-Mar-23</text>
<text x="1794.2" y="135.6" font-size="9.3" fill="#000" text-anchor="middle" textLength="46.13" lengthAdjust="spacingAndGlyphs"  stroke="#000" stroke-width="0.12">31-Mar-23</text>
<text x="1794.2" y="149.6" font-size="9.3" fill="#000" text-anchor="middle" textLength="22.25" lengthAdjust="spacingAndGlyphs"  stroke="#000" stroke-width="0.12">2023</text>
<text x="1794.2" y="164.6" font-size="9.3" fill="#000" text-anchor="middle" textLength="5.56" lengthAdjust="spacingAndGlyphs"  stroke="#000" stroke-width="0.12">1</text>
<text x="1861.1" y="107.6" font-size="9.3" fill="#00b050" text-anchor="middle" textLength="21.12" lengthAdjust="spacingAndGlyphs"  stroke="#00b050" stroke-width="0.12">Ops.</text>
<text x="1861.1" y="121.6" font-size="9.3" fill="#000" text-anchor="middle" textLength="38.91" lengthAdjust="spacingAndGlyphs"  stroke="#000" stroke-width="0.12">1-Apr-23</text>
<text x="1861.1" y="135.6" font-size="9.3" fill="#000" text-anchor="middle" textLength="44.47" lengthAdjust="spacingAndGlyphs"  stroke="#000" stroke-width="0.12">30-Apr-23</text>
<text x="1861.1" y="149.6" font-size="9.3" fill="#000" text-anchor="middle" textLength="22.25" lengthAdjust="spacingAndGlyphs"  stroke="#000" stroke-width="0.12">2023</text>
<text x="1861.1" y="164.6" font-size="9.3" fill="#000" text-anchor="middle" textLength="5.56" lengthAdjust="spacingAndGlyphs"  stroke="#000" stroke-width="0.12">1</text>
<text x="102" y="209.6" font-size="9.6" fill="#000" font-weight="bold" textLength="20.3" lengthAdjust="spacingAndGlyphs" >4.02</text>
<text x="128" y="209.6" font-size="9.6" fill="#000" font-weight="bold" textLength="80.2" lengthAdjust="spacingAndGlyphs" >Other Fixed Costs</text>
<text x="367.8" y="209.6" font-size="9.3" fill="#000" font-style="italic" textLength="49.5" lengthAdjust="spacingAndGlyphs"  stroke="#000" stroke-width="0.12">Indexation</text>
<text x="166.5" y="224.6" font-size="9.3" fill="#000" textLength="93.9" lengthAdjust="spacingAndGlyphs"  stroke="#000" stroke-width="0.12">Management Salary</text>
<rect x="365.5" y="213.5" width="76" height="15" fill="#ccff99" stroke="#bfbfbf" stroke-width="1"/>
<rect x="454.5" y="213.5" width="71" height="15" fill="#ffff99" stroke="#d9d9d9" stroke-width="1"/>
<path d="M444 217 L453 217 L448.5 225 Z" fill="#7f7f7f" shape-rendering="auto"/>
<text x="368.5" y="224.6" font-size="9.3" fill="#000" textLength="47" lengthAdjust="spacingAndGlyphs"  stroke="#000" stroke-width="0.12">Base Case</text>
<text x="520.5" y="224.6" font-size="9.3" fill="#000" text-anchor="end" textLength="47.5" lengthAdjust="spacingAndGlyphs"  stroke="#000" stroke-width="0.12">60,000.00</text>
<text x="574" y="224.6" font-size="9.3" fill="#808080" text-anchor="middle" textLength="17.4" lengthAdjust="spacingAndGlyphs"  stroke="#808080" stroke-width="0.12">US$</text>
<text x="624" y="224.6" font-size="9.3" fill="#ff0000" font-style="italic" textLength="81.5" lengthAdjust="spacingAndGlyphs"  stroke="#ff0000" stroke-width="0.12">Annual Cost Input</text>
<text x="166.5" y="239.6" font-size="9.3" fill="#000" textLength="21.9" lengthAdjust="spacingAndGlyphs"  stroke="#000" stroke-width="0.12">Rent</text>
<rect x="365.5" y="228.5" width="76" height="15" fill="#ccff99" stroke="#bfbfbf" stroke-width="1"/>
<rect x="454.5" y="228.5" width="71" height="15" fill="#ffff99" stroke="#d9d9d9" stroke-width="1"/>
<path d="M444 232 L453 232 L448.5 240 Z" fill="#7f7f7f" shape-rendering="auto"/>
<text x="368.5" y="239.6" font-size="9.3" fill="#000" textLength="47" lengthAdjust="spacingAndGlyphs"  stroke="#000" stroke-width="0.12">Base Case</text>
<text x="520.5" y="239.6" font-size="9.3" fill="#000" text-anchor="end" textLength="47.5" lengthAdjust="spacingAndGlyphs"  stroke="#000" stroke-width="0.12">30,000.00</text>
<text x="574" y="239.6" font-size="9.3" fill="#808080" text-anchor="middle" textLength="17.4" lengthAdjust="spacingAndGlyphs"  stroke="#808080" stroke-width="0.12">US$</text>
<text x="624" y="239.6" font-size="9.3" fill="#ff0000" font-style="italic" textLength="81.5" lengthAdjust="spacingAndGlyphs"  stroke="#ff0000" stroke-width="0.12">Annual Cost Input</text>
<text x="166.5" y="254.6" font-size="9.3" fill="#000" textLength="43.8" lengthAdjust="spacingAndGlyphs"  stroke="#000" stroke-width="0.12">Staff Cost</text>
<rect x="365.5" y="243.5" width="76" height="15" fill="#ccff99" stroke="#bfbfbf" stroke-width="1"/>
<rect x="454.5" y="243.5" width="71" height="15" fill="#ffff99" stroke="#d9d9d9" stroke-width="1"/>
<path d="M444 247 L453 247 L448.5 255 Z" fill="#7f7f7f" shape-rendering="auto"/>
<text x="368.5" y="254.6" font-size="9.3" fill="#000" textLength="47" lengthAdjust="spacingAndGlyphs"  stroke="#000" stroke-width="0.12">Base Case</text>
<text x="520.5" y="254.6" font-size="9.3" fill="#000" text-anchor="end" textLength="47.5" lengthAdjust="spacingAndGlyphs"  stroke="#000" stroke-width="0.12">72,000.00</text>
<text x="574" y="254.6" font-size="9.3" fill="#808080" text-anchor="middle" textLength="17.4" lengthAdjust="spacingAndGlyphs"  stroke="#808080" stroke-width="0.12">US$</text>
<text x="624" y="254.6" font-size="9.3" fill="#ff0000" font-style="italic" textLength="81.5" lengthAdjust="spacingAndGlyphs"  stroke="#ff0000" stroke-width="0.12">Annual Cost Input</text>
<text x="166.5" y="269.6" font-size="9.3" fill="#000" textLength="79" lengthAdjust="spacingAndGlyphs"  stroke="#000" stroke-width="0.12">Warehouse Rent</text>
<rect x="365.5" y="258.5" width="76" height="15" fill="#ccff99" stroke="#bfbfbf" stroke-width="1"/>
<rect x="454.5" y="258.5" width="71" height="15" fill="#ffff99" stroke="#d9d9d9" stroke-width="1"/>
<path d="M444 262 L453 262 L448.5 270 Z" fill="#7f7f7f" shape-rendering="auto"/>
<text x="368.5" y="269.6" font-size="9.3" fill="#000" textLength="47" lengthAdjust="spacingAndGlyphs"  stroke="#000" stroke-width="0.12">Base Case</text>
<text x="520.5" y="269.6" font-size="9.3" fill="#000" text-anchor="end" textLength="47.5" lengthAdjust="spacingAndGlyphs"  stroke="#000" stroke-width="0.12">50,000.00</text>
<text x="574" y="269.6" font-size="9.3" fill="#808080" text-anchor="middle" textLength="17.4" lengthAdjust="spacingAndGlyphs"  stroke="#808080" stroke-width="0.12">US$</text>
<text x="624" y="269.6" font-size="9.3" fill="#ff0000" font-style="italic" textLength="81.5" lengthAdjust="spacingAndGlyphs"  stroke="#ff0000" stroke-width="0.12">Annual Cost Input</text>
<text x="166.5" y="284.6" font-size="9.3" fill="#000" textLength="44.7" lengthAdjust="spacingAndGlyphs"  stroke="#000" stroke-width="0.12">SPV Costs</text>
<rect x="365.5" y="273.5" width="76" height="15" fill="#ccff99" stroke="#bfbfbf" stroke-width="1"/>
<rect x="454.5" y="273.5" width="71" height="15" fill="#ffff99" stroke="#d9d9d9" stroke-width="1"/>
<path d="M444 277 L453 277 L448.5 285 Z" fill="#7f7f7f" shape-rendering="auto"/>
<text x="368.5" y="284.6" font-size="9.3" fill="#000" textLength="47" lengthAdjust="spacingAndGlyphs"  stroke="#000" stroke-width="0.12">Base Case</text>
<text x="520.5" y="284.6" font-size="9.3" fill="#000" text-anchor="end" textLength="47.5" lengthAdjust="spacingAndGlyphs"  stroke="#000" stroke-width="0.12">20,000.00</text>
<text x="574" y="284.6" font-size="9.3" fill="#808080" text-anchor="middle" textLength="17.4" lengthAdjust="spacingAndGlyphs"  stroke="#808080" stroke-width="0.12">US$</text>
<text x="624" y="284.6" font-size="9.3" fill="#ff0000" font-style="italic" textLength="81.5" lengthAdjust="spacingAndGlyphs"  stroke="#ff0000" stroke-width="0.12">Annual Cost Input</text>
<text x="166.5" y="299.6" font-size="9.3" fill="#000" textLength="46.4" lengthAdjust="spacingAndGlyphs"  stroke="#000" stroke-width="0.12">Insurance</text>
<rect x="365.5" y="288.5" width="76" height="15" fill="#ccff99" stroke="#bfbfbf" stroke-width="1"/>
<rect x="454.5" y="288.5" width="71" height="15" fill="#ffff99" stroke="#d9d9d9" stroke-width="1"/>
<path d="M444 292 L453 292 L448.5 300 Z" fill="#7f7f7f" shape-rendering="auto"/>
<text x="368.5" y="299.6" font-size="9.3" fill="#000" textLength="47" lengthAdjust="spacingAndGlyphs"  stroke="#000" stroke-width="0.12">Base Case</text>
<text x="520.5" y="299.6" font-size="9.3" fill="#000" text-anchor="end" textLength="47.5" lengthAdjust="spacingAndGlyphs"  stroke="#000" stroke-width="0.12">20,000.00</text>
<text x="574" y="299.6" font-size="9.3" fill="#808080" text-anchor="middle" textLength="17.4" lengthAdjust="spacingAndGlyphs"  stroke="#808080" stroke-width="0.12">US$</text>
<text x="624" y="299.6" font-size="9.3" fill="#ff0000" font-style="italic" textLength="81.5" lengthAdjust="spacingAndGlyphs"  stroke="#ff0000" stroke-width="0.12">Annual Cost Input</text>
<text x="166.5" y="314.6" font-size="9.3" fill="#000" textLength="38" lengthAdjust="spacingAndGlyphs"  stroke="#000" stroke-width="0.12">Security</text>
<rect x="365.5" y="303.5" width="76" height="15" fill="#ccff99" stroke="#bfbfbf" stroke-width="1"/>
<rect x="454.5" y="303.5" width="71" height="15" fill="#ffff99" stroke="#d9d9d9" stroke-width="1"/>
<path d="M444 307 L453 307 L448.5 315 Z" fill="#7f7f7f" shape-rendering="auto"/>
<text x="368.5" y="314.6" font-size="9.3" fill="#000" textLength="47" lengthAdjust="spacingAndGlyphs"  stroke="#000" stroke-width="0.12">Base Case</text>
<text x="520.5" y="314.6" font-size="9.3" fill="#000" text-anchor="end" textLength="47.5" lengthAdjust="spacingAndGlyphs"  stroke="#000" stroke-width="0.12">10,000.00</text>
<text x="574" y="314.6" font-size="9.3" fill="#808080" text-anchor="middle" textLength="17.4" lengthAdjust="spacingAndGlyphs"  stroke="#808080" stroke-width="0.12">US$</text>
<text x="624" y="314.6" font-size="9.3" fill="#ff0000" font-style="italic" textLength="81.5" lengthAdjust="spacingAndGlyphs"  stroke="#ff0000" stroke-width="0.12">Annual Cost Input</text>
<text x="166.5" y="329.6" font-size="9.3" fill="#000" textLength="35.7" lengthAdjust="spacingAndGlyphs"  stroke="#000" stroke-width="0.12">License</text>
<rect x="365.5" y="318.5" width="76" height="15" fill="#ccff99" stroke="#bfbfbf" stroke-width="1"/>
<rect x="454.5" y="318.5" width="71" height="15" fill="#ffff99" stroke="#d9d9d9" stroke-width="1"/>
<path d="M444 322 L453 322 L448.5 330 Z" fill="#7f7f7f" shape-rendering="auto"/>
<text x="368.5" y="329.6" font-size="9.3" fill="#000" textLength="47" lengthAdjust="spacingAndGlyphs"  stroke="#000" stroke-width="0.12">Base Case</text>
<text x="520.5" y="329.6" font-size="9.3" fill="#000" text-anchor="end" textLength="47.5" lengthAdjust="spacingAndGlyphs"  stroke="#000" stroke-width="0.12">10,000.00</text>
<text x="574" y="329.6" font-size="9.3" fill="#808080" text-anchor="middle" textLength="17.4" lengthAdjust="spacingAndGlyphs"  stroke="#808080" stroke-width="0.12">US$</text>
<text x="624" y="329.6" font-size="9.3" fill="#ff0000" font-style="italic" textLength="81.5" lengthAdjust="spacingAndGlyphs"  stroke="#ff0000" stroke-width="0.12">Annual Cost Input</text>
<text x="166.5" y="344.6" font-size="9.3" fill="#000" textLength="32.8" lengthAdjust="spacingAndGlyphs"  stroke="#000" stroke-width="0.12">[Spare]</text>
<rect x="365.5" y="333.5" width="76" height="15" fill="#ccff99" stroke="#bfbfbf" stroke-width="1"/>
<rect x="454.5" y="333.5" width="71" height="15" fill="#ffff99" stroke="#d9d9d9" stroke-width="1"/>
<path d="M444 337 L453 337 L448.5 345 Z" fill="#7f7f7f" shape-rendering="auto"/>
<text x="368.5" y="344.6" font-size="9.3" fill="#000" textLength="47" lengthAdjust="spacingAndGlyphs"  stroke="#000" stroke-width="0.12">Base Case</text>
<text x="522" y="344.6" font-size="9.3" fill="#000" text-anchor="end" textLength="3.33" lengthAdjust="spacingAndGlyphs"  stroke="#000" stroke-width="0.12">-</text>
<text x="574" y="344.6" font-size="9.3" fill="#808080" text-anchor="middle" textLength="17.4" lengthAdjust="spacingAndGlyphs"  stroke="#808080" stroke-width="0.12">US$</text>
<text x="624" y="344.6" font-size="9.3" fill="#ff0000" font-style="italic" textLength="81.5" lengthAdjust="spacingAndGlyphs"  stroke="#ff0000" stroke-width="0.12">Annual Cost Input</text>
<text x="166.5" y="359.6" font-size="9.3" fill="#000" textLength="32.8" lengthAdjust="spacingAndGlyphs"  stroke="#000" stroke-width="0.12">[Spare]</text>
<rect x="365.5" y="348.5" width="76" height="15" fill="#ccff99" stroke="#bfbfbf" stroke-width="1"/>
<rect x="454.5" y="348.5" width="71" height="15" fill="#ffff99" stroke="#d9d9d9" stroke-width="1"/>
<path d="M444 352 L453 352 L448.5 360 Z" fill="#7f7f7f" shape-rendering="auto"/>
<text x="368.5" y="359.6" font-size="9.3" fill="#000" textLength="47" lengthAdjust="spacingAndGlyphs"  stroke="#000" stroke-width="0.12">Base Case</text>
<text x="522" y="359.6" font-size="9.3" fill="#000" text-anchor="end" textLength="3.33" lengthAdjust="spacingAndGlyphs"  stroke="#000" stroke-width="0.12">-</text>
<text x="574" y="359.6" font-size="9.3" fill="#808080" text-anchor="middle" textLength="17.4" lengthAdjust="spacingAndGlyphs"  stroke="#808080" stroke-width="0.12">US$</text>
<text x="624" y="359.6" font-size="9.3" fill="#ff0000" font-style="italic" textLength="81.5" lengthAdjust="spacingAndGlyphs"  stroke="#ff0000" stroke-width="0.12">Annual Cost Input</text>
<text x="166.5" y="374.6" font-size="9.3" fill="#000" textLength="32.8" lengthAdjust="spacingAndGlyphs"  stroke="#000" stroke-width="0.12">[Spare]</text>
<rect x="365.5" y="363.5" width="76" height="15" fill="#ccff99" stroke="#bfbfbf" stroke-width="1"/>
<rect x="454.5" y="363.5" width="71" height="15" fill="#ffff99" stroke="#d9d9d9" stroke-width="1"/>
<path d="M444 367 L453 367 L448.5 375 Z" fill="#7f7f7f" shape-rendering="auto"/>
<text x="368.5" y="374.6" font-size="9.3" fill="#000" textLength="47" lengthAdjust="spacingAndGlyphs"  stroke="#000" stroke-width="0.12">Base Case</text>
<text x="522" y="374.6" font-size="9.3" fill="#000" text-anchor="end" textLength="3.33" lengthAdjust="spacingAndGlyphs"  stroke="#000" stroke-width="0.12">-</text>
<text x="574" y="374.6" font-size="9.3" fill="#808080" text-anchor="middle" textLength="17.4" lengthAdjust="spacingAndGlyphs"  stroke="#808080" stroke-width="0.12">US$</text>
<text x="624" y="374.6" font-size="9.3" fill="#ff0000" font-style="italic" textLength="81.5" lengthAdjust="spacingAndGlyphs"  stroke="#ff0000" stroke-width="0.12">Annual Cost Input</text>
<rect x="22" y="393" width="599" height="17" fill="#44546a" />
<rect x="622" y="393" width="1276" height="17" fill="#44546a" />
<text x="51" y="406" font-size="10.5" fill="#fff" font-weight="bold" >5</text>
<text x="65" y="406" font-size="10.5" fill="#fff" font-weight="bold" textLength="51.7" lengthAdjust="spacingAndGlyphs" >Indexation</text>
<text x="102" y="435.6" font-size="9.6" fill="#000" font-weight="bold" textLength="20.3" lengthAdjust="spacingAndGlyphs" >5.01</text>
<text x="128" y="435.6" font-size="9.6" fill="#000" font-weight="bold" textLength="25" lengthAdjust="spacingAndGlyphs" >CPI %</text>
<rect x="621.5" y="424.5" width="67" height="15" fill="#ddebf7" stroke="#d0d7e0" stroke-width="1"/>
<text x="685.5" y="435.6" font-size="9.6" fill="#fa6414" text-anchor="end" font-weight="bold" textLength="22.25" lengthAdjust="spacingAndGlyphs" >2021</text>
<rect x="688.5" y="424.5" width="67" height="15" fill="#ddebf7" stroke="#d0d7e0" stroke-width="1"/>
<text x="752.5" y="435.6" font-size="9.6" fill="#fa6414" text-anchor="end" font-weight="bold" textLength="22.25" lengthAdjust="spacingAndGlyphs" >2022</text>
<rect x="755.5" y="424.5" width="67" height="15" fill="#ddebf7" stroke="#d0d7e0" stroke-width="1"/>
<text x="819.5" y="435.6" font-size="9.6" fill="#fa6414" text-anchor="end" font-weight="bold" textLength="22.25" lengthAdjust="spacingAndGlyphs" >2023</text>
<rect x="822.5" y="424.5" width="67" height="15" fill="#ddebf7" stroke="#d0d7e0" stroke-width="1"/>
<text x="886.5" y="435.6" font-size="9.6" fill="#fa6414" text-anchor="end" font-weight="bold" textLength="22.25" lengthAdjust="spacingAndGlyphs" >2024</text>
<rect x="889.5" y="424.5" width="67" height="15" fill="#ddebf7" stroke="#d0d7e0" stroke-width="1"/>
<text x="953.5" y="435.6" font-size="9.6" fill="#fa6414" text-anchor="end" font-weight="bold" textLength="22.25" lengthAdjust="spacingAndGlyphs" >2025</text>
<rect x="956.5" y="424.5" width="67" height="15" fill="#ddebf7" stroke="#d0d7e0" stroke-width="1"/>
<text x="1020.5" y="435.6" font-size="9.6" fill="#fa6414" text-anchor="end" font-weight="bold" textLength="22.25" lengthAdjust="spacingAndGlyphs" >2026</text>
<rect x="1023.5" y="424.5" width="67" height="15" fill="#ddebf7" stroke="#d0d7e0" stroke-width="1"/>
<text x="1087.5" y="435.6" font-size="9.6" fill="#fa6414" text-anchor="end" font-weight="bold" textLength="22.25" lengthAdjust="spacingAndGlyphs" >2027</text>
<rect x="1090.5" y="424.5" width="67" height="15" fill="#ddebf7" stroke="#d0d7e0" stroke-width="1"/>
<text x="1154.5" y="435.6" font-size="9.6" fill="#fa6414" text-anchor="end" font-weight="bold" textLength="22.25" lengthAdjust="spacingAndGlyphs" >2028</text>
<rect x="1157.5" y="424.5" width="67" height="15" fill="#ddebf7" stroke="#d0d7e0" stroke-width="1"/>
<text x="1221.5" y="435.6" font-size="9.6" fill="#fa6414" text-anchor="end" font-weight="bold" textLength="22.25" lengthAdjust="spacingAndGlyphs" >2029</text>
<rect x="1224.5" y="424.5" width="67" height="15" fill="#ddebf7" stroke="#d0d7e0" stroke-width="1"/>
<text x="1288.5" y="435.6" font-size="9.6" fill="#fa6414" text-anchor="end" font-weight="bold" textLength="22.25" lengthAdjust="spacingAndGlyphs" >2030</text>
<text x="160.5" y="450.6" font-size="9.6" fill="#000" text-anchor="end" font-weight="bold" textLength="5.56" lengthAdjust="spacingAndGlyphs" >1</text>
<rect x="163.5" y="439.5" width="202" height="15" fill="#ffff99" stroke="#d9d9d9" stroke-width="1"/>
<text x="166.5" y="450.6" font-size="9.3" fill="#000" textLength="17.4" lengthAdjust="spacingAndGlyphs"  stroke="#000" stroke-width="0.12">Flat</text>
<text x="574" y="450.6" font-size="9.3" fill="#808080" text-anchor="middle" textLength="8.89" lengthAdjust="spacingAndGlyphs"  stroke="#808080" stroke-width="0.12">%</text>
<rect x="621.5" y="439.5" width="67" height="15" fill="#ffff99" stroke="#d9d9d9" stroke-width="1"/>
<text x="686.5" y="450.6" font-size="9.3" fill="#000" text-anchor="end" textLength="3.33" lengthAdjust="spacingAndGlyphs"  stroke="#000" stroke-width="0.12">-</text>
<rect x="688.5" y="439.5" width="67" height="15" fill="#ffff99" stroke="#d9d9d9" stroke-width="1"/>
<text x="753.5" y="450.6" font-size="9.3" fill="#000" text-anchor="end" textLength="3.33" lengthAdjust="spacingAndGlyphs"  stroke="#000" stroke-width="0.12">-</text>
<rect x="755.5" y="439.5" width="67" height="15" fill="#ffff99" stroke="#d9d9d9" stroke-width="1"/>
<text x="820.5" y="450.6" font-size="9.3" fill="#000" text-anchor="end" textLength="3.33" lengthAdjust="spacingAndGlyphs"  stroke="#000" stroke-width="0.12">-</text>
<rect x="822.5" y="439.5" width="67" height="15" fill="#ffff99" stroke="#d9d9d9" stroke-width="1"/>
<text x="887.5" y="450.6" font-size="9.3" fill="#000" text-anchor="end" textLength="3.33" lengthAdjust="spacingAndGlyphs"  stroke="#000" stroke-width="0.12">-</text>
<rect x="889.5" y="439.5" width="67" height="15" fill="#ffff99" stroke="#d9d9d9" stroke-width="1"/>
<text x="954.5" y="450.6" font-size="9.3" fill="#000" text-anchor="end" textLength="3.33" lengthAdjust="spacingAndGlyphs"  stroke="#000" stroke-width="0.12">-</text>
<rect x="956.5" y="439.5" width="67" height="15" fill="#ffff99" stroke="#d9d9d9" stroke-width="1"/>
<text x="1021.5" y="450.6" font-size="9.3" fill="#000" text-anchor="end" textLength="3.33" lengthAdjust="spacingAndGlyphs"  stroke="#000" stroke-width="0.12">-</text>
<rect x="1023.5" y="439.5" width="67" height="15" fill="#ffff99" stroke="#d9d9d9" stroke-width="1"/>
<text x="1088.5" y="450.6" font-size="9.3" fill="#000" text-anchor="end" textLength="3.33" lengthAdjust="spacingAndGlyphs"  stroke="#000" stroke-width="0.12">-</text>
<rect x="1090.5" y="439.5" width="67" height="15" fill="#ffff99" stroke="#d9d9d9" stroke-width="1"/>
<text x="1155.5" y="450.6" font-size="9.3" fill="#000" text-anchor="end" textLength="3.33" lengthAdjust="spacingAndGlyphs"  stroke="#000" stroke-width="0.12">-</text>
<rect x="1157.5" y="439.5" width="67" height="15" fill="#ffff99" stroke="#d9d9d9" stroke-width="1"/>
<text x="1222.5" y="450.6" font-size="9.3" fill="#000" text-anchor="end" textLength="3.33" lengthAdjust="spacingAndGlyphs"  stroke="#000" stroke-width="0.12">-</text>
<rect x="1224.5" y="439.5" width="67" height="15" fill="#ffff99" stroke="#d9d9d9" stroke-width="1"/>
<text x="1289.5" y="450.6" font-size="9.3" fill="#000" text-anchor="end" textLength="3.33" lengthAdjust="spacingAndGlyphs"  stroke="#000" stroke-width="0.12">-</text>
<text x="160.5" y="465.6" font-size="9.6" fill="#000" text-anchor="end" font-weight="bold" textLength="5.56" lengthAdjust="spacingAndGlyphs" >2</text>
<rect x="163.5" y="454.5" width="202" height="15" fill="#ffff99" stroke="#d9d9d9" stroke-width="1"/>
<text x="166.5" y="465.6" font-size="9.3" fill="#000" textLength="45.2" lengthAdjust="spacingAndGlyphs"  stroke="#000" stroke-width="0.12">High Case</text>
<text x="574" y="465.6" font-size="9.3" fill="#808080" text-anchor="middle" textLength="8.89" lengthAdjust="spacingAndGlyphs"  stroke="#808080" stroke-width="0.12">%</text>
<rect x="621.5" y="454.5" width="67" height="15" fill="#ffff99" stroke="#d9d9d9" stroke-width="1"/>
<text x="683" y="465.6" font-size="9.3" fill="#000" text-anchor="end" textLength="22.79" lengthAdjust="spacingAndGlyphs"  stroke="#000" stroke-width="0.12">3.5%</text>
<rect x="688.5" y="454.5" width="67" height="15" fill="#ffff99" stroke="#d9d9d9" stroke-width="1"/>
<text x="750" y="465.6" font-size="9.3" fill="#000" text-anchor="end" textLength="22.79" lengthAdjust="spacingAndGlyphs"  stroke="#000" stroke-width="0.12">3.5%</text>
<rect x="755.5" y="454.5" width="67" height="15" fill="#ffff99" stroke="#d9d9d9" stroke-width="1"/>
<text x="817" y="465.6" font-size="9.3" fill="#000" text-anchor="end" textLength="22.79" lengthAdjust="spacingAndGlyphs"  stroke="#000" stroke-width="0.12">3.5%</text>
<rect x="822.5" y="454.5" width="67" height="15" fill="#ffff99" stroke="#d9d9d9" stroke-width="1"/>
<text x="884" y="465.6" font-size="9.3" fill="#000" text-anchor="end" textLength="22.79" lengthAdjust="spacingAndGlyphs"  stroke="#000" stroke-width="0.12">3.5%</text>
<rect x="889.5" y="454.5" width="67" height="15" fill="#ffff99" stroke="#d9d9d9" stroke-width="1"/>
<text x="951" y="465.6" font-size="9.3" fill="#000" text-anchor="end" textLength="22.79" lengthAdjust="spacingAndGlyphs"  stroke="#000" stroke-width="0.12">3.5%</text>
<rect x="956.5" y="454.5" width="67" height="15" fill="#ffff99" stroke="#d9d9d9" stroke-width="1"/>
<text x="1018" y="465.6" font-size="9.3" fill="#000" text-anchor="end" textLength="22.79" lengthAdjust="spacingAndGlyphs"  stroke="#000" stroke-width="0.12">3.5%</text>
<rect x="1023.5" y="454.5" width="67" height="15" fill="#ffff99" stroke="#d9d9d9" stroke-width="1"/>
<text x="1085" y="465.6" font-size="9.3" fill="#000" text-anchor="end" textLength="22.79" lengthAdjust="spacingAndGlyphs"  stroke="#000" stroke-width="0.12">3.5%</text>
<rect x="1090.5" y="454.5" width="67" height="15" fill="#ffff99" stroke="#d9d9d9" stroke-width="1"/>
<text x="1152" y="465.6" font-size="9.3" fill="#000" text-anchor="end" textLength="22.79" lengthAdjust="spacingAndGlyphs"  stroke="#000" stroke-width="0.12">3.5%</text>
<rect x="1157.5" y="454.5" width="67" height="15" fill="#ffff99" stroke="#d9d9d9" stroke-width="1"/>
<text x="1219" y="465.6" font-size="9.3" fill="#000" text-anchor="end" textLength="22.79" lengthAdjust="spacingAndGlyphs"  stroke="#000" stroke-width="0.12">3.5%</text>
<rect x="1224.5" y="454.5" width="67" height="15" fill="#ffff99" stroke="#d9d9d9" stroke-width="1"/>
<text x="1286" y="465.6" font-size="9.3" fill="#000" text-anchor="end" textLength="22.79" lengthAdjust="spacingAndGlyphs"  stroke="#000" stroke-width="0.12">3.5%</text>
<text x="160.5" y="480.6" font-size="9.6" fill="#000" text-anchor="end" font-weight="bold" textLength="5.56" lengthAdjust="spacingAndGlyphs" >3</text>
<rect x="163.5" y="469.5" width="202" height="15" fill="#ffff99" stroke="#d9d9d9" stroke-width="1"/>
<text x="166.5" y="480.6" font-size="9.3" fill="#000" textLength="47.1" lengthAdjust="spacingAndGlyphs"  stroke="#000" stroke-width="0.12">Base Case</text>
<text x="574" y="480.6" font-size="9.3" fill="#808080" text-anchor="middle" textLength="8.89" lengthAdjust="spacingAndGlyphs"  stroke="#808080" stroke-width="0.12">%</text>
<rect x="621.5" y="469.5" width="67" height="15" fill="#ffff99" stroke="#d9d9d9" stroke-width="1"/>
<text x="683" y="480.6" font-size="9.3" fill="#000" text-anchor="end" textLength="22.79" lengthAdjust="spacingAndGlyphs"  stroke="#000" stroke-width="0.12">2.0%</text>
<rect x="688.5" y="469.5" width="67" height="15" fill="#ffff99" stroke="#d9d9d9" stroke-width="1"/>
<text x="750" y="480.6" font-size="9.3" fill="#000" text-anchor="end" textLength="22.79" lengthAdjust="spacingAndGlyphs"  stroke="#000" stroke-width="0.12">2.0%</text>
<rect x="755.5" y="469.5" width="67" height="15" fill="#ffff99" stroke="#d9d9d9" stroke-width="1"/>
<text x="817" y="480.6" font-size="9.3" fill="#000" text-anchor="end" textLength="22.79" lengthAdjust="spacingAndGlyphs"  stroke="#000" stroke-width="0.12">2.5%</text>
<rect x="822.5" y="469.5" width="67" height="15" fill="#ffff99" stroke="#d9d9d9" stroke-width="1"/>
<text x="884" y="480.6" font-size="9.3" fill="#000" text-anchor="end" textLength="22.79" lengthAdjust="spacingAndGlyphs"  stroke="#000" stroke-width="0.12">2.5%</text>
<rect x="889.5" y="469.5" width="67" height="15" fill="#ffff99" stroke="#d9d9d9" stroke-width="1"/>
<text x="951" y="480.6" font-size="9.3" fill="#000" text-anchor="end" textLength="22.79" lengthAdjust="spacingAndGlyphs"  stroke="#000" stroke-width="0.12">2.8%</text>
<rect x="956.5" y="469.5" width="67" height="15" fill="#ffff99" stroke="#d9d9d9" stroke-width="1"/>
<text x="1018" y="480.6" font-size="9.3" fill="#000" text-anchor="end" textLength="22.79" lengthAdjust="spacingAndGlyphs"  stroke="#000" stroke-width="0.12">2.8%</text>
<rect x="1023.5" y="469.5" width="67" height="15" fill="#ffff99" stroke="#d9d9d9" stroke-width="1"/>
<text x="1085" y="480.6" font-size="9.3" fill="#000" text-anchor="end" textLength="22.79" lengthAdjust="spacingAndGlyphs"  stroke="#000" stroke-width="0.12">3.0%</text>
<rect x="1090.5" y="469.5" width="67" height="15" fill="#ffff99" stroke="#d9d9d9" stroke-width="1"/>
<text x="1152" y="480.6" font-size="9.3" fill="#000" text-anchor="end" textLength="22.79" lengthAdjust="spacingAndGlyphs"  stroke="#000" stroke-width="0.12">3.0%</text>
<rect x="1157.5" y="469.5" width="67" height="15" fill="#ffff99" stroke="#d9d9d9" stroke-width="1"/>
<text x="1219" y="480.6" font-size="9.3" fill="#000" text-anchor="end" textLength="22.79" lengthAdjust="spacingAndGlyphs"  stroke="#000" stroke-width="0.12">3.0%</text>
<rect x="1224.5" y="469.5" width="67" height="15" fill="#ffff99" stroke="#d9d9d9" stroke-width="1"/>
<text x="1286" y="480.6" font-size="9.3" fill="#000" text-anchor="end" textLength="22.79" lengthAdjust="spacingAndGlyphs"  stroke="#000" stroke-width="0.12">3.0%</text>
<text x="160.5" y="495.6" font-size="9.6" fill="#000" text-anchor="end" font-weight="bold" textLength="5.56" lengthAdjust="spacingAndGlyphs" >4</text>
<rect x="163.5" y="484.5" width="202" height="15" fill="#ffff99" stroke="#d9d9d9" stroke-width="1"/>
<text x="166.5" y="495.6" font-size="9.3" fill="#000" textLength="43.3" lengthAdjust="spacingAndGlyphs"  stroke="#000" stroke-width="0.12">Low Case</text>
<text x="574" y="495.6" font-size="9.3" fill="#808080" text-anchor="middle" textLength="8.89" lengthAdjust="spacingAndGlyphs"  stroke="#808080" stroke-width="0.12">%</text>
<rect x="621.5" y="484.5" width="67" height="15" fill="#ffff99" stroke="#d9d9d9" stroke-width="1"/>
<text x="683" y="495.6" font-size="9.3" fill="#000" text-anchor="end" textLength="22.79" lengthAdjust="spacingAndGlyphs"  stroke="#000" stroke-width="0.12">1.5%</text>
<rect x="688.5" y="484.5" width="67" height="15" fill="#ffff99" stroke="#d9d9d9" stroke-width="1"/>
<text x="750" y="495.6" font-size="9.3" fill="#000" text-anchor="end" textLength="22.79" lengthAdjust="spacingAndGlyphs"  stroke="#000" stroke-width="0.12">1.5%</text>
<rect x="755.5" y="484.5" width="67" height="15" fill="#ffff99" stroke="#d9d9d9" stroke-width="1"/>
<text x="817" y="495.6" font-size="9.3" fill="#000" text-anchor="end" textLength="22.79" lengthAdjust="spacingAndGlyphs"  stroke="#000" stroke-width="0.12">1.5%</text>
<rect x="822.5" y="484.5" width="67" height="15" fill="#ffff99" stroke="#d9d9d9" stroke-width="1"/>
<text x="884" y="495.6" font-size="9.3" fill="#000" text-anchor="end" textLength="22.79" lengthAdjust="spacingAndGlyphs"  stroke="#000" stroke-width="0.12">1.5%</text>
<rect x="889.5" y="484.5" width="67" height="15" fill="#ffff99" stroke="#d9d9d9" stroke-width="1"/>
<text x="951" y="495.6" font-size="9.3" fill="#000" text-anchor="end" textLength="22.79" lengthAdjust="spacingAndGlyphs"  stroke="#000" stroke-width="0.12">1.5%</text>
<rect x="956.5" y="484.5" width="67" height="15" fill="#ffff99" stroke="#d9d9d9" stroke-width="1"/>
<text x="1018" y="495.6" font-size="9.3" fill="#000" text-anchor="end" textLength="22.79" lengthAdjust="spacingAndGlyphs"  stroke="#000" stroke-width="0.12">1.5%</text>
<rect x="1023.5" y="484.5" width="67" height="15" fill="#ffff99" stroke="#d9d9d9" stroke-width="1"/>
<text x="1085" y="495.6" font-size="9.3" fill="#000" text-anchor="end" textLength="22.79" lengthAdjust="spacingAndGlyphs"  stroke="#000" stroke-width="0.12">1.5%</text>
<rect x="1090.5" y="484.5" width="67" height="15" fill="#ffff99" stroke="#d9d9d9" stroke-width="1"/>
<text x="1152" y="495.6" font-size="9.3" fill="#000" text-anchor="end" textLength="22.79" lengthAdjust="spacingAndGlyphs"  stroke="#000" stroke-width="0.12">1.5%</text>
<rect x="1157.5" y="484.5" width="67" height="15" fill="#ffff99" stroke="#d9d9d9" stroke-width="1"/>
<text x="1219" y="495.6" font-size="9.3" fill="#000" text-anchor="end" textLength="22.79" lengthAdjust="spacingAndGlyphs"  stroke="#000" stroke-width="0.12">1.5%</text>
<rect x="1224.5" y="484.5" width="67" height="15" fill="#ffff99" stroke="#d9d9d9" stroke-width="1"/>
<text x="1286" y="495.6" font-size="9.3" fill="#000" text-anchor="end" textLength="22.79" lengthAdjust="spacingAndGlyphs"  stroke="#000" stroke-width="0.12">1.5%</text>
<text x="160.5" y="510.6" font-size="9.6" fill="#000" text-anchor="end" font-weight="bold" textLength="5.56" lengthAdjust="spacingAndGlyphs" >5</text>
<rect x="163.5" y="499.5" width="202" height="15" fill="#ffff99" stroke="#d9d9d9" stroke-width="1"/>
<text x="166.5" y="510.6" font-size="9.3" fill="#000" textLength="70.9" lengthAdjust="spacingAndGlyphs"  stroke="#000" stroke-width="0.12">Merchant Price</text>
<text x="574" y="510.6" font-size="9.3" fill="#808080" text-anchor="middle" textLength="8.89" lengthAdjust="spacingAndGlyphs"  stroke="#808080" stroke-width="0.12">%</text>
<rect x="621.5" y="499.5" width="67" height="15" fill="#ffff99" stroke="#d9d9d9" stroke-width="1"/>
<text x="686.5" y="510.6" font-size="9.3" fill="#000" text-anchor="end" textLength="3.33" lengthAdjust="spacingAndGlyphs"  stroke="#000" stroke-width="0.12">-</text>
<rect x="688.5" y="499.5" width="67" height="15" fill="#ffff99" stroke="#d9d9d9" stroke-width="1"/>
<text x="750" y="510.6" font-size="9.3" fill="#000" text-anchor="end" textLength="28.35" lengthAdjust="spacingAndGlyphs"  stroke="#000" stroke-width="0.12">10.0%</text>
<rect x="755.5" y="499.5" width="67" height="15" fill="#ffff99" stroke="#d9d9d9" stroke-width="1"/>
<text x="817" y="510.6" font-size="9.3" fill="#000" text-anchor="end" textLength="28.35" lengthAdjust="spacingAndGlyphs"  stroke="#000" stroke-width="0.12">10.0%</text>
<rect x="822.5" y="499.5" width="67" height="15" fill="#ffff99" stroke="#d9d9d9" stroke-width="1"/>
<text x="887.5" y="510.6" font-size="9.3" fill="#000" text-anchor="end" textLength="3.33" lengthAdjust="spacingAndGlyphs"  stroke="#000" stroke-width="0.12">-</text>
<rect x="889.5" y="499.5" width="67" height="15" fill="#ffff99" stroke="#d9d9d9" stroke-width="1"/>
<text x="954.5" y="510.6" font-size="9.3" fill="#000" text-anchor="end" textLength="3.33" lengthAdjust="spacingAndGlyphs"  stroke="#000" stroke-width="0.12">-</text>
<rect x="956.5" y="499.5" width="67" height="15" fill="#ffff99" stroke="#d9d9d9" stroke-width="1"/>
<text x="1021.5" y="510.6" font-size="9.3" fill="#000" text-anchor="end" textLength="3.33" lengthAdjust="spacingAndGlyphs"  stroke="#000" stroke-width="0.12">-</text>
<rect x="1023.5" y="499.5" width="67" height="15" fill="#ffff99" stroke="#d9d9d9" stroke-width="1"/>
<text x="1088.5" y="510.6" font-size="9.3" fill="#000" text-anchor="end" textLength="3.33" lengthAdjust="spacingAndGlyphs"  stroke="#000" stroke-width="0.12">-</text>
<rect x="1090.5" y="499.5" width="67" height="15" fill="#ffff99" stroke="#d9d9d9" stroke-width="1"/>
<text x="1155.5" y="510.6" font-size="9.3" fill="#000" text-anchor="end" textLength="3.33" lengthAdjust="spacingAndGlyphs"  stroke="#000" stroke-width="0.12">-</text>
<rect x="1157.5" y="499.5" width="67" height="15" fill="#ffff99" stroke="#d9d9d9" stroke-width="1"/>
<text x="1222.5" y="510.6" font-size="9.3" fill="#000" text-anchor="end" textLength="3.33" lengthAdjust="spacingAndGlyphs"  stroke="#000" stroke-width="0.12">-</text>
<rect x="1224.5" y="499.5" width="67" height="15" fill="#ffff99" stroke="#d9d9d9" stroke-width="1"/>
<text x="1289.5" y="510.6" font-size="9.3" fill="#000" text-anchor="end" textLength="3.33" lengthAdjust="spacingAndGlyphs"  stroke="#000" stroke-width="0.12">-</text>
<text x="160.5" y="525.6" font-size="9.6" fill="#000" text-anchor="end" font-weight="bold" textLength="5.56" lengthAdjust="spacingAndGlyphs" >6</text>
<rect x="163.5" y="514.5" width="202" height="15" fill="#ffff99" stroke="#d9d9d9" stroke-width="1"/>
<text x="166.5" y="525.6" font-size="9.3" fill="#000" textLength="30.4" lengthAdjust="spacingAndGlyphs"  stroke="#000" stroke-width="0.12">Case 2</text>
<text x="574" y="525.6" font-size="9.3" fill="#808080" text-anchor="middle" textLength="8.89" lengthAdjust="spacingAndGlyphs"  stroke="#808080" stroke-width="0.12">%</text>
<rect x="621.5" y="514.5" width="67" height="15" fill="#ffff99" stroke="#d9d9d9" stroke-width="1"/>
<text x="686.5" y="525.6" font-size="9.3" fill="#000" text-anchor="end" textLength="3.33" lengthAdjust="spacingAndGlyphs"  stroke="#000" stroke-width="0.12">-</text>
<rect x="688.5" y="514.5" width="67" height="15" fill="#ffff99" stroke="#d9d9d9" stroke-width="1"/>
<text x="753.5" y="525.6" font-size="9.3" fill="#000" text-anchor="end" textLength="3.33" lengthAdjust="spacingAndGlyphs"  stroke="#000" stroke-width="0.12">-</text>
<rect x="755.5" y="514.5" width="67" height="15" fill="#ffff99" stroke="#d9d9d9" stroke-width="1"/>
<text x="820.5" y="525.6" font-size="9.3" fill="#000" text-anchor="end" textLength="3.33" lengthAdjust="spacingAndGlyphs"  stroke="#000" stroke-width="0.12">-</text>
<rect x="822.5" y="514.5" width="67" height="15" fill="#ffff99" stroke="#d9d9d9" stroke-width="1"/>
<text x="887.5" y="525.6" font-size="9.3" fill="#000" text-anchor="end" textLength="3.33" lengthAdjust="spacingAndGlyphs"  stroke="#000" stroke-width="0.12">-</text>
<rect x="889.5" y="514.5" width="67" height="15" fill="#ffff99" stroke="#d9d9d9" stroke-width="1"/>
<text x="954.5" y="525.6" font-size="9.3" fill="#000" text-anchor="end" textLength="3.33" lengthAdjust="spacingAndGlyphs"  stroke="#000" stroke-width="0.12">-</text>
<rect x="956.5" y="514.5" width="67" height="15" fill="#ffff99" stroke="#d9d9d9" stroke-width="1"/>
<text x="1021.5" y="525.6" font-size="9.3" fill="#000" text-anchor="end" textLength="3.33" lengthAdjust="spacingAndGlyphs"  stroke="#000" stroke-width="0.12">-</text>
<rect x="1023.5" y="514.5" width="67" height="15" fill="#ffff99" stroke="#d9d9d9" stroke-width="1"/>
<text x="1088.5" y="525.6" font-size="9.3" fill="#000" text-anchor="end" textLength="3.33" lengthAdjust="spacingAndGlyphs"  stroke="#000" stroke-width="0.12">-</text>
<rect x="1090.5" y="514.5" width="67" height="15" fill="#ffff99" stroke="#d9d9d9" stroke-width="1"/>
<text x="1155.5" y="525.6" font-size="9.3" fill="#000" text-anchor="end" textLength="3.33" lengthAdjust="spacingAndGlyphs"  stroke="#000" stroke-width="0.12">-</text>
<rect x="1157.5" y="514.5" width="67" height="15" fill="#ffff99" stroke="#d9d9d9" stroke-width="1"/>
<text x="1222.5" y="525.6" font-size="9.3" fill="#000" text-anchor="end" textLength="3.33" lengthAdjust="spacingAndGlyphs"  stroke="#000" stroke-width="0.12">-</text>
<rect x="1224.5" y="514.5" width="67" height="15" fill="#ffff99" stroke="#d9d9d9" stroke-width="1"/>
<text x="1289.5" y="525.6" font-size="9.3" fill="#000" text-anchor="end" textLength="3.33" lengthAdjust="spacingAndGlyphs"  stroke="#000" stroke-width="0.12">-</text>
<text x="160.5" y="540.6" font-size="9.6" fill="#000" text-anchor="end" font-weight="bold" textLength="5.56" lengthAdjust="spacingAndGlyphs" >7</text>
<rect x="163.5" y="529.5" width="202" height="15" fill="#ffff99" stroke="#d9d9d9" stroke-width="1"/>
<text x="166.5" y="540.6" font-size="9.3" fill="#000" textLength="30.4" lengthAdjust="spacingAndGlyphs"  stroke="#000" stroke-width="0.12">Case 3</text>
<text x="574" y="540.6" font-size="9.3" fill="#808080" text-anchor="middle" textLength="8.89" lengthAdjust="spacingAndGlyphs"  stroke="#808080" stroke-width="0.12">%</text>
<rect x="621.5" y="529.5" width="67" height="15" fill="#ffff99" stroke="#d9d9d9" stroke-width="1"/>
<text x="686.5" y="540.6" font-size="9.3" fill="#000" text-anchor="end" textLength="3.33" lengthAdjust="spacingAndGlyphs"  stroke="#000" stroke-width="0.12">-</text>
<rect x="688.5" y="529.5" width="67" height="15" fill="#ffff99" stroke="#d9d9d9" stroke-width="1"/>
<text x="753.5" y="540.6" font-size="9.3" fill="#000" text-anchor="end" textLength="3.33" lengthAdjust="spacingAndGlyphs"  stroke="#000" stroke-width="0.12">-</text>
<rect x="755.5" y="529.5" width="67" height="15" fill="#ffff99" stroke="#d9d9d9" stroke-width="1"/>
<text x="820.5" y="540.6" font-size="9.3" fill="#000" text-anchor="end" textLength="3.33" lengthAdjust="spacingAndGlyphs"  stroke="#000" stroke-width="0.12">-</text>
<rect x="822.5" y="529.5" width="67" height="15" fill="#ffff99" stroke="#d9d9d9" stroke-width="1"/>
<text x="887.5" y="540.6" font-size="9.3" fill="#000" text-anchor="end" textLength="3.33" lengthAdjust="spacingAndGlyphs"  stroke="#000" stroke-width="0.12">-</text>
<rect x="889.5" y="529.5" width="67" height="15" fill="#ffff99" stroke="#d9d9d9" stroke-width="1"/>
<text x="954.5" y="540.6" font-size="9.3" fill="#000" text-anchor="end" textLength="3.33" lengthAdjust="spacingAndGlyphs"  stroke="#000" stroke-width="0.12">-</text>
<rect x="956.5" y="529.5" width="67" height="15" fill="#ffff99" stroke="#d9d9d9" stroke-width="1"/>
<text x="1021.5" y="540.6" font-size="9.3" fill="#000" text-anchor="end" textLength="3.33" lengthAdjust="spacingAndGlyphs"  stroke="#000" stroke-width="0.12">-</text>
<rect x="1023.5" y="529.5" width="67" height="15" fill="#ffff99" stroke="#d9d9d9" stroke-width="1"/>
<text x="1088.5" y="540.6" font-size="9.3" fill="#000" text-anchor="end" textLength="3.33" lengthAdjust="spacingAndGlyphs"  stroke="#000" stroke-width="0.12">-</text>
<rect x="1090.5" y="529.5" width="67" height="15" fill="#ffff99" stroke="#d9d9d9" stroke-width="1"/>
<text x="1155.5" y="540.6" font-size="9.3" fill="#000" text-anchor="end" textLength="3.33" lengthAdjust="spacingAndGlyphs"  stroke="#000" stroke-width="0.12">-</text>
<rect x="1157.5" y="529.5" width="67" height="15" fill="#ffff99" stroke="#d9d9d9" stroke-width="1"/>
<text x="1222.5" y="540.6" font-size="9.3" fill="#000" text-anchor="end" textLength="3.33" lengthAdjust="spacingAndGlyphs"  stroke="#000" stroke-width="0.12">-</text>
<rect x="1224.5" y="529.5" width="67" height="15" fill="#ffff99" stroke="#d9d9d9" stroke-width="1"/>
<text x="1289.5" y="540.6" font-size="9.3" fill="#000" text-anchor="end" textLength="3.33" lengthAdjust="spacingAndGlyphs"  stroke="#000" stroke-width="0.12">-</text>
<text x="160.5" y="555.6" font-size="9.6" fill="#000" text-anchor="end" font-weight="bold" textLength="5.56" lengthAdjust="spacingAndGlyphs" >8</text>
<rect x="163.5" y="544.5" width="202" height="15" fill="#ffff99" stroke="#d9d9d9" stroke-width="1"/>
<text x="166.5" y="555.6" font-size="9.3" fill="#000" textLength="30.4" lengthAdjust="spacingAndGlyphs"  stroke="#000" stroke-width="0.12">Case 4</text>
<text x="574" y="555.6" font-size="9.3" fill="#808080" text-anchor="middle" textLength="8.89" lengthAdjust="spacingAndGlyphs"  stroke="#808080" stroke-width="0.12">%</text>
<rect x="621.5" y="544.5" width="67" height="15" fill="#ffff99" stroke="#d9d9d9" stroke-width="1"/>
<text x="686.5" y="555.6" font-size="9.3" fill="#000" text-anchor="end" textLength="3.33" lengthAdjust="spacingAndGlyphs"  stroke="#000" stroke-width="0.12">-</text>
<rect x="688.5" y="544.5" width="67" height="15" fill="#ffff99" stroke="#d9d9d9" stroke-width="1"/>
<text x="753.5" y="555.6" font-size="9.3" fill="#000" text-anchor="end" textLength="3.33" lengthAdjust="spacingAndGlyphs"  stroke="#000" stroke-width="0.12">-</text>
<rect x="755.5" y="544.5" width="67" height="15" fill="#ffff99" stroke="#d9d9d9" stroke-width="1"/>
<text x="820.5" y="555.6" font-size="9.3" fill="#000" text-anchor="end" textLength="3.33" lengthAdjust="spacingAndGlyphs"  stroke="#000" stroke-width="0.12">-</text>
<rect x="822.5" y="544.5" width="67" height="15" fill="#ffff99" stroke="#d9d9d9" stroke-width="1"/>
<text x="887.5" y="555.6" font-size="9.3" fill="#000" text-anchor="end" textLength="3.33" lengthAdjust="spacingAndGlyphs"  stroke="#000" stroke-width="0.12">-</text>
<rect x="889.5" y="544.5" width="67" height="15" fill="#ffff99" stroke="#d9d9d9" stroke-width="1"/>
<text x="954.5" y="555.6" font-size="9.3" fill="#000" text-anchor="end" textLength="3.33" lengthAdjust="spacingAndGlyphs"  stroke="#000" stroke-width="0.12">-</text>
<rect x="956.5" y="544.5" width="67" height="15" fill="#ffff99" stroke="#d9d9d9" stroke-width="1"/>
<text x="1021.5" y="555.6" font-size="9.3" fill="#000" text-anchor="end" textLength="3.33" lengthAdjust="spacingAndGlyphs"  stroke="#000" stroke-width="0.12">-</text>
<rect x="1023.5" y="544.5" width="67" height="15" fill="#ffff99" stroke="#d9d9d9" stroke-width="1"/>
<text x="1088.5" y="555.6" font-size="9.3" fill="#000" text-anchor="end" textLength="3.33" lengthAdjust="spacingAndGlyphs"  stroke="#000" stroke-width="0.12">-</text>
<rect x="1090.5" y="544.5" width="67" height="15" fill="#ffff99" stroke="#d9d9d9" stroke-width="1"/>
<text x="1155.5" y="555.6" font-size="9.3" fill="#000" text-anchor="end" textLength="3.33" lengthAdjust="spacingAndGlyphs"  stroke="#000" stroke-width="0.12">-</text>
<rect x="1157.5" y="544.5" width="67" height="15" fill="#ffff99" stroke="#d9d9d9" stroke-width="1"/>
<text x="1222.5" y="555.6" font-size="9.3" fill="#000" text-anchor="end" textLength="3.33" lengthAdjust="spacingAndGlyphs"  stroke="#000" stroke-width="0.12">-</text>
<rect x="1224.5" y="544.5" width="67" height="15" fill="#ffff99" stroke="#d9d9d9" stroke-width="1"/>
<text x="1289.5" y="555.6" font-size="9.3" fill="#000" text-anchor="end" textLength="3.33" lengthAdjust="spacingAndGlyphs"  stroke="#000" stroke-width="0.12">-</text>
<text x="160.5" y="570.6" font-size="9.6" fill="#000" text-anchor="end" font-weight="bold" textLength="5.56" lengthAdjust="spacingAndGlyphs" >9</text>
<rect x="163.5" y="559.5" width="202" height="15" fill="#ffff99" stroke="#d9d9d9" stroke-width="1"/>
<text x="166.5" y="570.6" font-size="9.3" fill="#000" textLength="30.4" lengthAdjust="spacingAndGlyphs"  stroke="#000" stroke-width="0.12">Case 5</text>
<text x="574" y="570.6" font-size="9.3" fill="#808080" text-anchor="middle" textLength="8.89" lengthAdjust="spacingAndGlyphs"  stroke="#808080" stroke-width="0.12">%</text>
<rect x="621.5" y="559.5" width="67" height="15" fill="#ffff99" stroke="#d9d9d9" stroke-width="1"/>
<text x="686.5" y="570.6" font-size="9.3" fill="#000" text-anchor="end" textLength="3.33" lengthAdjust="spacingAndGlyphs"  stroke="#000" stroke-width="0.12">-</text>
<rect x="688.5" y="559.5" width="67" height="15" fill="#ffff99" stroke="#d9d9d9" stroke-width="1"/>
<text x="753.5" y="570.6" font-size="9.3" fill="#000" text-anchor="end" textLength="3.33" lengthAdjust="spacingAndGlyphs"  stroke="#000" stroke-width="0.12">-</text>
<rect x="755.5" y="559.5" width="67" height="15" fill="#ffff99" stroke="#d9d9d9" stroke-width="1"/>
<text x="820.5" y="570.6" font-size="9.3" fill="#000" text-anchor="end" textLength="3.33" lengthAdjust="spacingAndGlyphs"  stroke="#000" stroke-width="0.12">-</text>
<rect x="822.5" y="559.5" width="67" height="15" fill="#ffff99" stroke="#d9d9d9" stroke-width="1"/>
<text x="887.5" y="570.6" font-size="9.3" fill="#000" text-anchor="end" textLength="3.33" lengthAdjust="spacingAndGlyphs"  stroke="#000" stroke-width="0.12">-</text>
<rect x="889.5" y="559.5" width="67" height="15" fill="#ffff99" stroke="#d9d9d9" stroke-width="1"/>
<text x="954.5" y="570.6" font-size="9.3" fill="#000" text-anchor="end" textLength="3.33" lengthAdjust="spacingAndGlyphs"  stroke="#000" stroke-width="0.12">-</text>
<rect x="956.5" y="559.5" width="67" height="15" fill="#ffff99" stroke="#d9d9d9" stroke-width="1"/>
<text x="1021.5" y="570.6" font-size="9.3" fill="#000" text-anchor="end" textLength="3.33" lengthAdjust="spacingAndGlyphs"  stroke="#000" stroke-width="0.12">-</text>
<rect x="1023.5" y="559.5" width="67" height="15" fill="#ffff99" stroke="#d9d9d9" stroke-width="1"/>
<text x="1088.5" y="570.6" font-size="9.3" fill="#000" text-anchor="end" textLength="3.33" lengthAdjust="spacingAndGlyphs"  stroke="#000" stroke-width="0.12">-</text>
<rect x="1090.5" y="559.5" width="67" height="15" fill="#ffff99" stroke="#d9d9d9" stroke-width="1"/>
<text x="1155.5" y="570.6" font-size="9.3" fill="#000" text-anchor="end" textLength="3.33" lengthAdjust="spacingAndGlyphs"  stroke="#000" stroke-width="0.12">-</text>
<rect x="1157.5" y="559.5" width="67" height="15" fill="#ffff99" stroke="#d9d9d9" stroke-width="1"/>
<text x="1222.5" y="570.6" font-size="9.3" fill="#000" text-anchor="end" textLength="3.33" lengthAdjust="spacingAndGlyphs"  stroke="#000" stroke-width="0.12">-</text>
<rect x="1224.5" y="559.5" width="67" height="15" fill="#ffff99" stroke="#d9d9d9" stroke-width="1"/>
<text x="1289.5" y="570.6" font-size="9.3" fill="#000" text-anchor="end" textLength="3.33" lengthAdjust="spacingAndGlyphs"  stroke="#000" stroke-width="0.12">-</text>
<text x="160.5" y="585.6" font-size="9.6" fill="#000" text-anchor="end" font-weight="bold" textLength="11.12" lengthAdjust="spacingAndGlyphs" >10</text>
<rect x="163.5" y="574.5" width="202" height="15" fill="#ffff99" stroke="#d9d9d9" stroke-width="1"/>
<text x="166.5" y="585.6" font-size="9.3" fill="#000" textLength="30.4" lengthAdjust="spacingAndGlyphs"  stroke="#000" stroke-width="0.12">Case 6</text>
<text x="574" y="585.6" font-size="9.3" fill="#808080" text-anchor="middle" textLength="8.89" lengthAdjust="spacingAndGlyphs"  stroke="#808080" stroke-width="0.12">%</text>
<rect x="621.5" y="574.5" width="67" height="15" fill="#ffff99" stroke="#d9d9d9" stroke-width="1"/>
<text x="686.5" y="585.6" font-size="9.3" fill="#000" text-anchor="end" textLength="3.33" lengthAdjust="spacingAndGlyphs"  stroke="#000" stroke-width="0.12">-</text>
<rect x="688.5" y="574.5" width="67" height="15" fill="#ffff99" stroke="#d9d9d9" stroke-width="1"/>
<text x="753.5" y="585.6" font-size="9.3" fill="#000" text-anchor="end" textLength="3.33" lengthAdjust="spacingAndGlyphs"  stroke="#000" stroke-width="0.12">-</text>
<rect x="755.5" y="574.5" width="67" height="15" fill="#ffff99" stroke="#d9d9d9" stroke-width="1"/>
<text x="820.5" y="585.6" font-size="9.3" fill="#000" text-anchor="end" textLength="3.33" lengthAdjust="spacingAndGlyphs"  stroke="#000" stroke-width="0.12">-</text>
<rect x="822.5" y="574.5" width="67" height="15" fill="#ffff99" stroke="#d9d9d9" stroke-width="1"/>
<text x="887.5" y="585.6" font-size="9.3" fill="#000" text-anchor="end" textLength="3.33" lengthAdjust="spacingAndGlyphs"  stroke="#000" stroke-width="0.12">-</text>
<rect x="889.5" y="574.5" width="67" height="15" fill="#ffff99" stroke="#d9d9d9" stroke-width="1"/>
<text x="954.5" y="585.6" font-size="9.3" fill="#000" text-anchor="end" textLength="3.33" lengthAdjust="spacingAndGlyphs"  stroke="#000" stroke-width="0.12">-</text>
<rect x="956.5" y="574.5" width="67" height="15" fill="#ffff99" stroke="#d9d9d9" stroke-width="1"/>
<text x="1021.5" y="585.6" font-size="9.3" fill="#000" text-anchor="end" textLength="3.33" lengthAdjust="spacingAndGlyphs"  stroke="#000" stroke-width="0.12">-</text>
<rect x="1023.5" y="574.5" width="67" height="15" fill="#ffff99" stroke="#d9d9d9" stroke-width="1"/>
<text x="1088.5" y="585.6" font-size="9.3" fill="#000" text-anchor="end" textLength="3.33" lengthAdjust="spacingAndGlyphs"  stroke="#000" stroke-width="0.12">-</text>
<rect x="1090.5" y="574.5" width="67" height="15" fill="#ffff99" stroke="#d9d9d9" stroke-width="1"/>
<text x="1155.5" y="585.6" font-size="9.3" fill="#000" text-anchor="end" textLength="3.33" lengthAdjust="spacingAndGlyphs"  stroke="#000" stroke-width="0.12">-</text>
<rect x="1157.5" y="574.5" width="67" height="15" fill="#ffff99" stroke="#d9d9d9" stroke-width="1"/>
<text x="1222.5" y="585.6" font-size="9.3" fill="#000" text-anchor="end" textLength="3.33" lengthAdjust="spacingAndGlyphs"  stroke="#000" stroke-width="0.12">-</text>
<rect x="1224.5" y="574.5" width="67" height="15" fill="#ffff99" stroke="#d9d9d9" stroke-width="1"/>
<text x="1289.5" y="585.6" font-size="9.3" fill="#000" text-anchor="end" textLength="3.33" lengthAdjust="spacingAndGlyphs"  stroke="#000" stroke-width="0.12">-</text>
<text x="624" y="600.6" font-size="9.3" fill="#ff0000" font-style="italic" textLength="649" lengthAdjust="spacingAndGlyphs"  stroke="#ff0000" stroke-width="0.12">Inflation % in table above is for first 10 years including Construction. From year 11 onwards the inflation %  is assumed equal to that of year 10.</text>
<text x="102" y="615.6" font-size="9.6" fill="#000" font-weight="bold" textLength="20.3" lengthAdjust="spacingAndGlyphs" >5.02</text>
<text x="128" y="615.6" font-size="9.6" fill="#000" font-weight="bold" textLength="97" lengthAdjust="spacingAndGlyphs" >Indexation Start Date</text>
<text x="160.5" y="630.6" font-size="9.6" fill="#000" text-anchor="end" font-weight="bold" textLength="5.56" lengthAdjust="spacingAndGlyphs" >1</text>
<text x="166.5" y="630.6" font-size="9.3" fill="#000" textLength="17.4" lengthAdjust="spacingAndGlyphs"  stroke="#000" stroke-width="0.12">Flat</text>
<rect x="454.5" y="619.5" width="71" height="15" fill="#ffff99" stroke="#d9d9d9" stroke-width="1"/>
<text x="522.5" y="630.6" font-size="9.3" fill="#000" text-anchor="end" textLength="39.47" lengthAdjust="spacingAndGlyphs"  stroke="#000" stroke-width="0.12">1-Jan-23</text>
<text x="573.3" y="630.6" font-size="9.3" fill="#808080" text-anchor="middle" textLength="21.12" lengthAdjust="spacingAndGlyphs"  stroke="#808080" stroke-width="0.12">Date</text>
<text x="160.5" y="645.6" font-size="9.6" fill="#000" text-anchor="end" font-weight="bold" textLength="5.56" lengthAdjust="spacingAndGlyphs" >2</text>
<text x="166.5" y="645.6" font-size="9.3" fill="#000" textLength="45.2" lengthAdjust="spacingAndGlyphs"  stroke="#000" stroke-width="0.12">High Case</text>
<rect x="454.5" y="634.5" width="71" height="15" fill="#ffff99" stroke="#d9d9d9" stroke-width="1"/>
<text x="522.5" y="645.6" font-size="9.3" fill="#000" text-anchor="end" textLength="39.47" lengthAdjust="spacingAndGlyphs"  stroke="#000" stroke-width="0.12">1-Jan-23</text>
<text x="573.3" y="645.6" font-size="9.3" fill="#808080" text-anchor="middle" textLength="21.12" lengthAdjust="spacingAndGlyphs"  stroke="#808080" stroke-width="0.12">Date</text>
<text x="160.5" y="660.6" font-size="9.6" fill="#000" text-anchor="end" font-weight="bold" textLength="5.56" lengthAdjust="spacingAndGlyphs" >3</text>
<text x="166.5" y="660.6" font-size="9.3" fill="#000" textLength="47.1" lengthAdjust="spacingAndGlyphs"  stroke="#000" stroke-width="0.12">Base Case</text>
<rect x="454.5" y="649.5" width="71" height="15" fill="#ffff99" stroke="#d9d9d9" stroke-width="1"/>
<text x="522.5" y="660.6" font-size="9.3" fill="#000" text-anchor="end" textLength="39.47" lengthAdjust="spacingAndGlyphs"  stroke="#000" stroke-width="0.12">1-Jan-23</text>
<text x="573.3" y="660.6" font-size="9.3" fill="#808080" text-anchor="middle" textLength="21.12" lengthAdjust="spacingAndGlyphs"  stroke="#808080" stroke-width="0.12">Date</text>
<text x="160.5" y="675.6" font-size="9.6" fill="#000" text-anchor="end" font-weight="bold" textLength="5.56" lengthAdjust="spacingAndGlyphs" >4</text>
<text x="166.5" y="675.6" font-size="9.3" fill="#000" textLength="43.3" lengthAdjust="spacingAndGlyphs"  stroke="#000" stroke-width="0.12">Low Case</text>
<rect x="454.5" y="664.5" width="71" height="15" fill="#ffff99" stroke="#d9d9d9" stroke-width="1"/>
<text x="522.5" y="675.6" font-size="9.3" fill="#000" text-anchor="end" textLength="39.47" lengthAdjust="spacingAndGlyphs"  stroke="#000" stroke-width="0.12">1-Jan-23</text>
<text x="573.3" y="675.6" font-size="9.3" fill="#808080" text-anchor="middle" textLength="21.12" lengthAdjust="spacingAndGlyphs"  stroke="#808080" stroke-width="0.12">Date</text>
<text x="160.5" y="690.6" font-size="9.6" fill="#000" text-anchor="end" font-weight="bold" textLength="5.56" lengthAdjust="spacingAndGlyphs" >5</text>
<text x="166.5" y="690.6" font-size="9.3" fill="#000" textLength="70.9" lengthAdjust="spacingAndGlyphs"  stroke="#000" stroke-width="0.12">Merchant Price</text>
<rect x="454.5" y="679.5" width="71" height="15" fill="#ffff99" stroke="#d9d9d9" stroke-width="1"/>
<text x="522.5" y="690.6" font-size="9.3" fill="#000" text-anchor="end" textLength="39.47" lengthAdjust="spacingAndGlyphs"  stroke="#000" stroke-width="0.12">1-Jan-23</text>
<text x="573.3" y="690.6" font-size="9.3" fill="#808080" text-anchor="middle" textLength="21.12" lengthAdjust="spacingAndGlyphs"  stroke="#808080" stroke-width="0.12">Date</text>
<text x="160.5" y="705.6" font-size="9.6" fill="#000" text-anchor="end" font-weight="bold" textLength="5.56" lengthAdjust="spacingAndGlyphs" >6</text>
<text x="166.5" y="705.6" font-size="9.3" fill="#000" textLength="30.4" lengthAdjust="spacingAndGlyphs"  stroke="#000" stroke-width="0.12">Case 2</text>
<rect x="454.5" y="694.5" width="71" height="15" fill="#ffff99" stroke="#d9d9d9" stroke-width="1"/>
<text x="522.5" y="705.6" font-size="9.3" fill="#000" text-anchor="end" textLength="39.47" lengthAdjust="spacingAndGlyphs"  stroke="#000" stroke-width="0.12">1-Jan-23</text>
<text x="573.3" y="705.6" font-size="9.3" fill="#808080" text-anchor="middle" textLength="21.12" lengthAdjust="spacingAndGlyphs"  stroke="#808080" stroke-width="0.12">Date</text>
<text x="160.5" y="720.6" font-size="9.6" fill="#000" text-anchor="end" font-weight="bold" textLength="5.56" lengthAdjust="spacingAndGlyphs" >7</text>
<text x="166.5" y="720.6" font-size="9.3" fill="#000" textLength="30.4" lengthAdjust="spacingAndGlyphs"  stroke="#000" stroke-width="0.12">Case 3</text>
<rect x="454.5" y="709.5" width="71" height="15" fill="#ffff99" stroke="#d9d9d9" stroke-width="1"/>
<text x="522.5" y="720.6" font-size="9.3" fill="#000" text-anchor="end" textLength="39.47" lengthAdjust="spacingAndGlyphs"  stroke="#000" stroke-width="0.12">1-Jan-23</text>
<text x="573.3" y="720.6" font-size="9.3" fill="#808080" text-anchor="middle" textLength="21.12" lengthAdjust="spacingAndGlyphs"  stroke="#808080" stroke-width="0.12">Date</text>
<text x="160.5" y="735.6" font-size="9.6" fill="#000" text-anchor="end" font-weight="bold" textLength="5.56" lengthAdjust="spacingAndGlyphs" >8</text>
<text x="166.5" y="735.6" font-size="9.3" fill="#000" textLength="30.4" lengthAdjust="spacingAndGlyphs"  stroke="#000" stroke-width="0.12">Case 4</text>
<rect x="454.5" y="724.5" width="71" height="15" fill="#ffff99" stroke="#d9d9d9" stroke-width="1"/>
<text x="522.5" y="735.6" font-size="9.3" fill="#000" text-anchor="end" textLength="39.47" lengthAdjust="spacingAndGlyphs"  stroke="#000" stroke-width="0.12">1-Jan-23</text>
<text x="573.3" y="735.6" font-size="9.3" fill="#808080" text-anchor="middle" textLength="21.12" lengthAdjust="spacingAndGlyphs"  stroke="#808080" stroke-width="0.12">Date</text>
<text x="160.5" y="750.6" font-size="9.6" fill="#000" text-anchor="end" font-weight="bold" textLength="5.56" lengthAdjust="spacingAndGlyphs" >9</text>
<text x="166.5" y="750.6" font-size="9.3" fill="#000" textLength="30.4" lengthAdjust="spacingAndGlyphs"  stroke="#000" stroke-width="0.12">Case 5</text>
<rect x="454.5" y="739.5" width="71" height="15" fill="#ffff99" stroke="#d9d9d9" stroke-width="1"/>
<text x="522.5" y="750.6" font-size="9.3" fill="#000" text-anchor="end" textLength="39.47" lengthAdjust="spacingAndGlyphs"  stroke="#000" stroke-width="0.12">1-Jan-23</text>
<text x="573.3" y="750.6" font-size="9.3" fill="#808080" text-anchor="middle" textLength="21.12" lengthAdjust="spacingAndGlyphs"  stroke="#808080" stroke-width="0.12">Date</text>
<text x="160.5" y="765.6" font-size="9.6" fill="#000" text-anchor="end" font-weight="bold" textLength="11.12" lengthAdjust="spacingAndGlyphs" >10</text>
<text x="166.5" y="765.6" font-size="9.3" fill="#000" textLength="30.4" lengthAdjust="spacingAndGlyphs"  stroke="#000" stroke-width="0.12">Case 6</text>
<rect x="454.5" y="754.5" width="71" height="15" fill="#ffff99" stroke="#d9d9d9" stroke-width="1"/>
<text x="522.5" y="765.6" font-size="9.3" fill="#000" text-anchor="end" textLength="39.47" lengthAdjust="spacingAndGlyphs"  stroke="#000" stroke-width="0.12">1-Jan-23</text>
<text x="573.3" y="765.6" font-size="9.3" fill="#808080" text-anchor="middle" textLength="21.12" lengthAdjust="spacingAndGlyphs"  stroke="#808080" stroke-width="0.12">Date</text>
<rect x="22" y="784" width="599" height="17" fill="#44546a" />
<rect x="622" y="784" width="1276" height="17" fill="#44546a" />
<text x="51" y="797" font-size="10.5" fill="#fff" font-weight="bold" >6</text>
<text x="65" y="797" font-size="10.5" fill="#fff" font-weight="bold" textLength="172" lengthAdjust="spacingAndGlyphs" >Capital Expenditure and Setup Cost</text>
<rect x="163" y="830" width="203" height="1" fill="#d9d9d9" />
<rect x="454" y="830" width="72" height="1" fill="#d9d9d9" />
<text x="102" y="826.6" font-size="9.6" fill="#000" font-weight="bold" textLength="20.3" lengthAdjust="spacingAndGlyphs" >6.01</text>
<text x="128" y="826.6" font-size="9.6" fill="#000" font-weight="bold" textLength="128.6" lengthAdjust="spacingAndGlyphs" >Machinery and Equipment&#x27;s</text>
<rect x="621" y="62" width="1" height="769" fill="#a0a0a0" />
<rect x="0" y="198" width="1898" height="1" fill="#a0a0a0" />
<rect x="620" y="814" width="70" height="2" fill="#217346" />
<rect x="620" y="814" width="2" height="17" fill="#217346" />
<rect x="688" y="814" width="2" height="12" fill="#217346" />
<rect x="622" y="829" width="63" height="2" fill="#217346" />
<rect x="686" y="827" width="5" height="4" fill="#217346" />
<rect x="1898" y="47" width="22" height="784" fill="#e6e6e6" />
<rect x="1902.5" y="50.5" width="14" height="14" fill="#ffffff" stroke="#c6c6c6" stroke-width="1"/>
<path d="M1905.5 59.5 L1913.5 59.5 L1909.5 55.5 Z" fill="#777" shape-rendering="auto"/>
<rect x="1903" y="65" width="14" height="751" fill="#dadada" />
<rect x="1902.5" y="134.5" width="14" height="622" fill="#ffffff" stroke="#c6c6c6" stroke-width="1"/>
<rect x="1902.5" y="816.5" width="14" height="14" fill="#ffffff" stroke="#c6c6c6" stroke-width="1"/>
<path d="M1905.5 821.5 L1913.5 821.5 L1909.5 825.5 Z" fill="#777" shape-rendering="auto"/>
<line x1="1898.5" y1="62" x2="1898.5" y2="831" stroke="#ababab" stroke-width="1"/>
<rect x="0" y="831" width="1920" height="28" fill="#e6e6e6" />
<line x1="0" y1="831.5" x2="1898" y2="831.5" stroke="#ababab" stroke-width="1"/>
<line x1="0" y1="859.5" x2="1920" y2="859.5" stroke="#d0d0d0" stroke-width="1"/>
<path d="M31.5 840.5 L31.5 848.5 L27 844.5 Z" fill="#c0c0c0" shape-rendering="auto"/>
<path d="M55.5 840.5 L55.5 848.5 L60.5 844.5 Z" fill="#217346" shape-rendering="auto"/>
<rect x="103" y="834" width="53" height="22" fill="#0070c0" />
<text x="113" y="849" font-size="13.0" fill="#ffffff" textLength="30.75" lengthAdjust="spacingAndGlyphs" >Index</text>
<rect x="161" y="834" width="72" height="22" fill="#0070c0" />
<text x="170.3" y="849" font-size="13.0" fill="#ffffff" textLength="52.4" lengthAdjust="spacingAndGlyphs" >Read Me</text>
<rect x="238" y="834" width="86" height="22" fill="#00b050" />
<text x="248.3" y="849" font-size="13.0" fill="#000000" textLength="64" lengthAdjust="spacingAndGlyphs" >Dashboard</text>
<rect x="329" y="834" width="82" height="22" fill="#00b050" />
<text x="341.3" y="849" font-size="13.0" fill="#000000" textLength="56.3" lengthAdjust="spacingAndGlyphs" >FS_Annual</text>
<rect x="416" y="834" width="90" height="22" fill="#00b050" />
<text x="428.4" y="849" font-size="13.0" fill="#000000" textLength="64.5" lengthAdjust="spacingAndGlyphs" >FS_Monthly</text>
<rect x="511" y="834" width="71" height="22" fill="#00b050" />
<text x="521.3" y="849" font-size="13.0" fill="#000000" textLength="48.3" lengthAdjust="spacingAndGlyphs" >NPV-IRR</text>
<rect x="587" y="834" width="141" height="22" fill="#00b050" />
<text x="601.2" y="849" font-size="13.0" fill="#000000" textLength="111.7" lengthAdjust="spacingAndGlyphs" >Valuation Summary</text>
<rect x="733" y="834" width="97" height="22" fill="#00b050" />
<text x="745.4" y="849" font-size="13.0" fill="#000000" textLength="71.6" lengthAdjust="spacingAndGlyphs" >Exit Strategy</text>
<rect x="939" y="834" width="116" height="22" fill="#ffff66" />
<text x="951.4" y="849" font-size="13.0" fill="#000000" textLength="89.6" lengthAdjust="spacingAndGlyphs" >Menu &amp; Pricing</text>
<rect x="1060" y="834" width="95" height="22" fill="#000000" />
<text x="1072.7" y="849" font-size="13.0" fill="#ffffff" textLength="72" lengthAdjust="spacingAndGlyphs" >Construction</text>
<line x1="100.5" y1="835" x2="100.5" y2="855" stroke="#a8a8a8" stroke-width="1"/>
<line x1="158.5" y1="835" x2="158.5" y2="855" stroke="#a8a8a8" stroke-width="1"/>
<line x1="235.5" y1="835" x2="235.5" y2="855" stroke="#a8a8a8" stroke-width="1"/>
<line x1="326.5" y1="835" x2="326.5" y2="855" stroke="#a8a8a8" stroke-width="1"/>
<line x1="413.5" y1="835" x2="413.5" y2="855" stroke="#a8a8a8" stroke-width="1"/>
<line x1="508.5" y1="835" x2="508.5" y2="855" stroke="#a8a8a8" stroke-width="1"/>
<line x1="584.5" y1="835" x2="584.5" y2="855" stroke="#a8a8a8" stroke-width="1"/>
<line x1="730.5" y1="835" x2="730.5" y2="855" stroke="#a8a8a8" stroke-width="1"/>
<line x1="1057.5" y1="835" x2="1057.5" y2="855" stroke="#a8a8a8" stroke-width="1"/>
<defs><linearGradient id="atg" x1="0" y1="0" x2="0" y2="1"><stop offset="0" stop-color="#ffffff"/><stop offset="1" stop-color="#fdfbe0"/></linearGradient></defs>
<rect x="832" y="831" width="104" height="24" fill="url(#atg)" />
<line x1="832.5" y1="831" x2="832.5" y2="855" stroke="#ababab" stroke-width="1"/>
<line x1="936.5" y1="831" x2="936.5" y2="855" stroke="#ababab" stroke-width="1"/>
<rect x="832" y="854" width="105" height="2" fill="#217346" />
<text x="844.2" y="849" font-size="13.0" fill="#217346" font-weight="bold" textLength="80" lengthAdjust="spacingAndGlyphs" >Assumptions</text>
<rect x="1164" y="847" width="2" height="2" fill="#217346" />
<rect x="1168.5" y="847" width="2" height="2" fill="#217346" />
<rect x="1172.5" y="847" width="2" height="2" fill="#217346" />
<circle cx="1196" cy="845" r="7.5" fill="none" stroke="#707070" stroke-width="1.2" shape-rendering="auto"/>
<rect x="1192" y="844.2" width="8" height="1.8" fill="#6a6a6a" />
<rect x="1195.1" y="841" width="1.8" height="8" fill="#6a6a6a" />
<rect x="1224" y="840" width="2" height="2" fill="#a8a8a8" />
<rect x="1224" y="844" width="2" height="2" fill="#a8a8a8" />
<rect x="1224" y="848" width="2" height="2" fill="#a8a8a8" />
<rect x="1241" y="838" width="656" height="15" fill="#dadada" />
<rect x="1241.5" y="838.5" width="14" height="14" fill="#ffffff" stroke="#c6c6c6" stroke-width="1"/>
<path d="M1251.5 841.5 L1251.5 849.5 L1247 845.5 Z" fill="#777" shape-rendering="auto"/>
<rect x="1256.5" y="838.5" width="339" height="14" fill="#ffffff" stroke="#c6c6c6" stroke-width="1"/>
<rect x="1882.5" y="838.5" width="14" height="14" fill="#ffffff" stroke="#c6c6c6" stroke-width="1"/>
<path d="M1887.5 841.5 L1887.5 849.5 L1892 845.5 Z" fill="#777" shape-rendering="auto"/>
<rect x="0" y="860" width="1920" height="21" fill="#f3f2f1" />
<rect x="0" y="881" width="1920" height="2" fill="#1b1b1b" />
<rect x="48" y="881" width="344" height="2" fill="#f3f2f1" />
<rect x="688" y="881" width="47" height="2" fill="#5a5a5a" />
<text x="25" y="874" font-size="12.0" fill="#444" textLength="122" lengthAdjust="spacingAndGlyphs" >Accessibility: Investigate</text>
<g fill="none" stroke="#3a3a3a" stroke-width="1.1" stroke-linecap="round" shape-rendering="auto"><path d="M7.6 868.2 L11 864.7"/><path d="M7.5 870.6 Q8.5 874.5 12.5 875.4"/><path d="M13.5 863.3 L13.5 868.5"/><path d="M15.5 870.4 L21.6 876.6 M21.6 870.4 L15.5 876.6"/></g><path d="M11.6 868.2 L15.4 868.2 L13.5 870.3 Z" fill="#3a3a3a" shape-rendering="auto"/><path d="M18.5 866 L19.9 868.4 L18.5 870.7 L17.1 868.4 Z" fill="#3a3a3a" shape-rendering="auto"/>
<rect x="1626" y="860" width="40" height="21" fill="#c8c6c4" />
<g fill="none" stroke="#222" stroke-width="1"><rect x="1639.5" y="863.5" width="12" height="12"/><line x1="1643.5" y1="863.5" x2="1643.5" y2="875.5"/><line x1="1647.5" y1="863.5" x2="1647.5" y2="875.5"/><line x1="1639.5" y1="867.5" x2="1651.5" y2="867.5"/><line x1="1639.5" y1="871.5" x2="1651.5" y2="871.5"/></g>
<g fill="none" stroke="#333" stroke-width="1"><rect x="1679.5" y="863.5" width="13" height="12"/><rect x="1681.5" y="865.5" width="9" height="8"/><line x1="1683" y1="867.5" x2="1689" y2="867.5"/><line x1="1683" y1="869.5" x2="1689" y2="869.5"/><line x1="1683" y1="871.5" x2="1689" y2="871.5"/></g>
<g fill="none" stroke="#333" stroke-width="1"><rect x="1719.5" y="863.5" width="13" height="12"/><path d="M1719.5 869.5 L1727.5 869.5 L1727.5 863.5 M1723.5 863.5 L1723.5 869.5"/></g>
<rect x="1752" y="869" width="8" height="1.3" fill="#444" />
<rect x="1765" y="869.5" width="100" height="1" fill="#b0b0b0" />
<rect x="1815" y="866" width="1" height="7" fill="#b0b0b0" />
<rect x="1800" y="864" width="5" height="11" fill="#707070" />
<rect x="1870" y="869" width="8" height="1.3" fill="#444" />
<rect x="1873.4" y="865.5" width="1.3" height="8.5" fill="#444" />
<text x="1891.6" y="873" font-size="12.0" fill="#444" textLength="20.3" lengthAdjust="spacingAndGlyphs" >75%</text>
</svg></body></html>
